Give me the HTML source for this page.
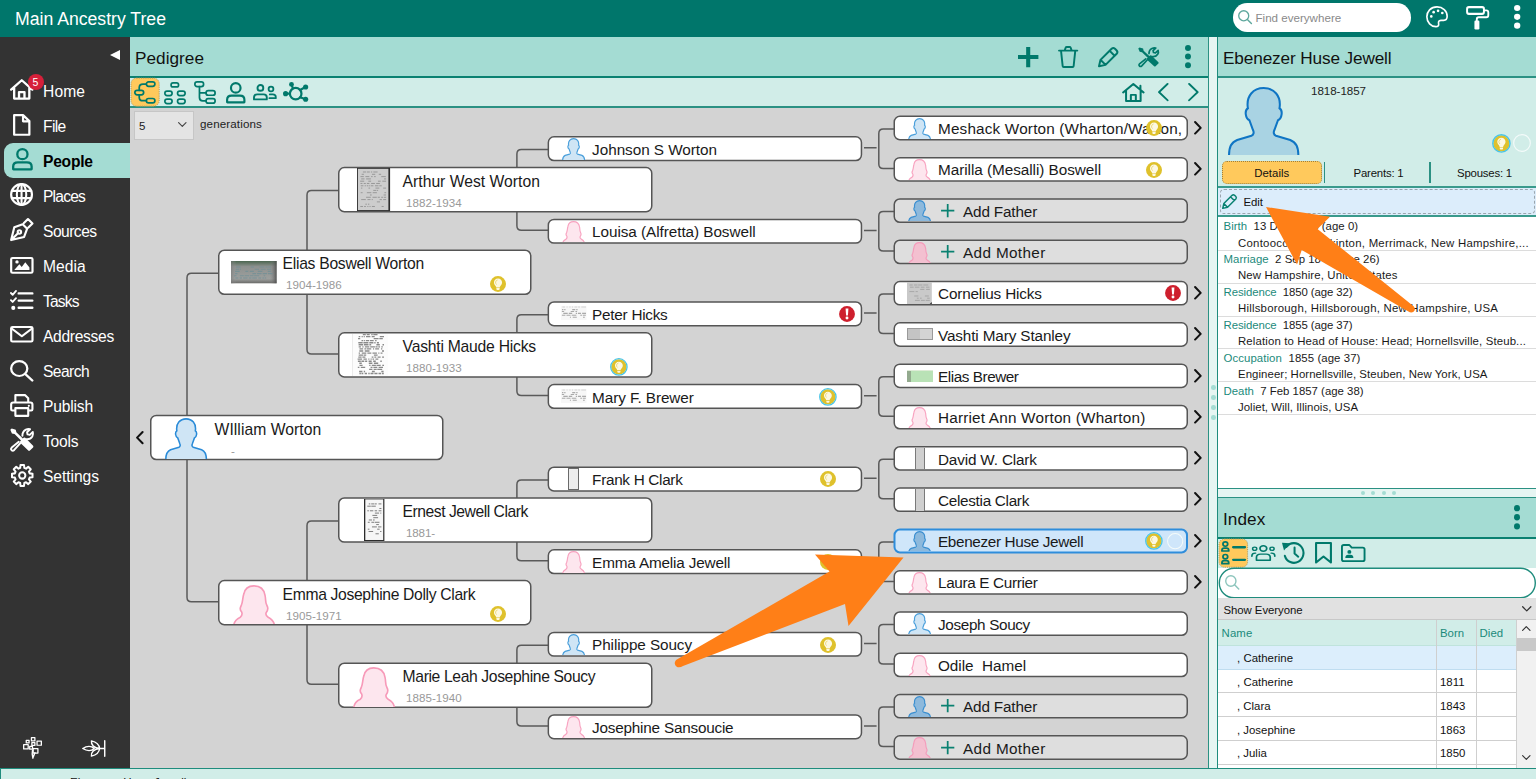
<!DOCTYPE html>
<html lang="en"><head><meta charset="utf-8"><title>Main Ancestry Tree</title>
<style>
*{box-sizing:border-box;margin:0;padding:0}
html,body{width:1536px;height:779px;overflow:hidden;background:#D3D3D3}
body{font-family:"Liberation Sans",sans-serif;color:#1a1a1a;position:relative}
.a{position:absolute}
.ic{position:absolute;overflow:visible}
.t{position:absolute;white-space:nowrap;line-height:1}
#top{left:0;top:0;width:1536px;height:37px;background:#00766B}
#side{left:0;top:37px;width:130px;height:732px;background:#333}
.nav{color:#fff;font-size:15.6px;left:43px}
.box{position:absolute;border-radius:5px;overflow:hidden}
.nm{font-size:15.3px;color:#1a1a1a}
.dt{font-size:11.6px;color:#999}
.ev{font-size:11.4px}
.ev b{font-weight:normal;color:#1B8A7B}
</style></head><body>

<div id="top" class="a"></div>
<div class="t" style="left:15px;top:11px;font-size:17.65px;color:#fff;letter-spacing:0.000px">Main Ancestry Tree</div>
<div class="a" style="left:1232.6px;top:3px;width:178.4px;height:28.5px;border-radius:14.25px;background:#fff"></div>
<svg class="ic" style="left:1237.80px;top:9.70px;width:14.20px;height:14.30px;color:#5FA89E;" viewBox="0.25 0.25 14.75 14.75" preserveAspectRatio="none"><circle fill="none" stroke="currentColor" stroke-width="1.4" stroke-linecap="round" stroke-linejoin="round" cx="6.2" cy="6.2" r="5.2"/><path fill="none" stroke="currentColor" stroke-width="1.5" stroke-linecap="round" stroke-linejoin="round" d="M10 10 L14.2 14.2"/></svg>
<div class="t" style="left:1255.5px;top:12px;font-size:11.6px;color:#8a8a8a;letter-spacing:-0.000px">Find everywhere</div>
<svg class="ic" style="left:1426.00px;top:5.70px;width:22.00px;height:21.70px;color:#fff;" viewBox="0.12 0.25 22.75 21.5" preserveAspectRatio="none"><path fill="none" stroke="currentColor" stroke-width="1.7" stroke-linecap="round" stroke-linejoin="round" d="M11.5 1.2 C5 1.2 1 5.6 1 11 C1 16.6 5.4 20.8 10.4 20.8 C12.6 20.8 13.4 19.6 13.2 18.2 C12.8 16.2 13 14.4 15.6 14.4 H18.4 C20.6 14.4 22 13 22 10.4 C22 5 17.4 1.2 11.5 1.2 Z"/><circle fill="currentColor" cx="5.6" cy="10.6" r="1.35"/><circle fill="currentColor" cx="8" cy="6.4" r="1.35"/><circle fill="currentColor" cx="12.6" cy="5" r="1.35"/><circle fill="currentColor" cx="17" cy="7.2" r="1.35"/></svg>
<svg class="ic" style="left:1465.70px;top:6.00px;width:23.30px;height:23.50px;color:#fff;" viewBox="0.5 0.5 23.5 23.0" preserveAspectRatio="none"><rect fill="none" stroke="currentColor" stroke-width="2" stroke-linecap="round" stroke-linejoin="round" x="1.6" y="1.6" width="17" height="6.6" rx="1.8"/><path fill="none" stroke="currentColor" stroke-width="1.9" stroke-linecap="round" stroke-linejoin="round" d="M18.6 4.8 H21 Q23 4.8 23 6.8 V9.6 Q23 11.6 21 11.6 H13.4 Q11.4 11.6 11.4 13.4 V15"/><rect fill="currentColor" x="9" y="14.6" width="5" height="8.8" rx="1.2"/></svg>
<svg class="ic" style="left:1513.80px;top:4.90px;width:6.40px;height:23.70px;color:#fff;" viewBox="0.88 0.5 6.25 24.0" preserveAspectRatio="none"><circle fill="currentColor" cx="4" cy="3.6" r="3.1"/><circle fill="currentColor" cx="4" cy="12.5" r="3.1"/><circle fill="currentColor" cx="4" cy="21.4" r="3.1"/></svg>
<div id="side" class="a"></div>
<div class="a" style="left:110px;top:49.5px;width:0;height:0;border-top:5.5px solid transparent;border-bottom:5.5px solid transparent;border-right:10.3px solid #fff"></div>
<div class="a" style="left:4px;top:143px;width:126px;height:35px;background:#A4DCD3;border-radius:9px 0 0 9px"></div>
<svg class="ic" style="left:9.50px;top:79.00px;width:23.50px;height:20.80px;color:#fff;" viewBox="0.38 0.75 23.25 21.0" preserveAspectRatio="none"><path fill="none" stroke="currentColor" stroke-width="2.3" stroke-linecap="round" stroke-linejoin="round" d="M1.5 11.5 L12 2 L22.5 11.5 M4.5 9.5 V20.5 H19.5 V9.5 M9.3 20.5 V14 H14.7 V20.5"/></svg>
<div class="t nav" style="top:84px;color:#fff;font-weight:normal;letter-spacing:0.123px">Home</div>
<svg class="ic" style="left:13.20px;top:113.90px;width:17.50px;height:21.90px;color:#fff;" viewBox="4.38 1.12 17.25 22.0" preserveAspectRatio="none"><path fill="none" stroke="currentColor" stroke-width="2.2" stroke-linecap="round" stroke-linejoin="round" d="M5.5 2.3 H14.5 L20.5 8.3 V22 H5.5 Z M14.3 2.5 V8.5 H20.3"/></svg>
<div class="t nav" style="top:119px;color:#fff;font-weight:normal;letter-spacing:-0.635px">File</div>
<svg class="ic" style="left:11.50px;top:148.00px;width:20.80px;height:22.50px;color:#00796B;" viewBox="2.12 0.88 20.75 22.88" preserveAspectRatio="none"><circle fill="none" stroke="currentColor" stroke-width="2.3" stroke-linecap="round" stroke-linejoin="round" cx="12.5" cy="7.2" r="5.1"/><path fill="none" stroke="currentColor" stroke-width="2.3" stroke-linecap="round" stroke-linejoin="round" d="M3.3 22.3 V19.8 Q3.3 15.4 8 15.4 H17 Q21.7 15.4 21.7 19.8 V22.3 Q21.7 22.6 21.4 22.6 H3.6 Q3.3 22.6 3.3 22.3 Z"/></svg>
<div class="t nav" style="top:154px;color:#000;font-weight:bold;letter-spacing:-0.240px">People</div>
<svg class="ic" style="left:10.40px;top:183.00px;width:23.10px;height:23.00px;color:#fff;" viewBox="0.75 0.75 23.5 23.5" preserveAspectRatio="none"><circle fill="none" stroke="currentColor" stroke-width="2.2" stroke-linecap="round" stroke-linejoin="round" cx="12.5" cy="12.5" r="10.6"/><ellipse fill="none" stroke="currentColor" stroke-width="2.1" stroke-linecap="round" stroke-linejoin="round" cx="12.5" cy="12.5" rx="4.8" ry="10.6"/><path fill="none" stroke="currentColor" stroke-width="2.1" stroke-linecap="round" stroke-linejoin="round" d="M2.6 8.8 H22.4 M2.6 16.2 H22.4 M12.5 2 V23"/></svg>
<div class="t nav" style="top:189px;color:#fff;font-weight:normal;letter-spacing:-0.802px">Places</div>
<svg class="ic" style="left:10.40px;top:217.80px;width:23.60px;height:23.20px;color:#fff;" viewBox="1.38 1.5 23.12 23.12" preserveAspectRatio="none"><path fill="none" stroke="currentColor" stroke-width="2.1" stroke-linecap="round" stroke-linejoin="round" d="M2.5 23.5 L5.6 10.8 L13.8 7.8 L18.2 12.2 L15.2 20.4 Z M2.8 23.2 L9.2 16.8 M15 6.6 L19 2.6 L23.4 7 L19.4 11"/><circle fill="none" stroke="currentColor" stroke-width="2" stroke-linecap="round" stroke-linejoin="round" cx="10.6" cy="15.4" r="1.7"/></svg>
<div class="t nav" style="top:224px;color:#fff;font-weight:normal;letter-spacing:-0.517px">Sources</div>
<svg class="ic" style="left:10.40px;top:256.50px;width:23.60px;height:16.90px;color:#fff;" viewBox="1.12 3.5 23.88 17.88" preserveAspectRatio="none"><rect fill="none" stroke="currentColor" stroke-width="2.2" stroke-linecap="round" stroke-linejoin="round" x="2.3" y="4.6" width="21.6" height="15.6" rx="1.4"/><path fill="currentColor" d="M5.4 17.3 L10.6 11.3 L13 14 L16.6 9 L20.8 14.6 V17.3 Z"/><circle fill="currentColor" cx="8.2" cy="8.7" r="1.7"/></svg>
<div class="t nav" style="top:259px;color:#fff;font-weight:normal;letter-spacing:0.043px">Media</div>
<svg class="ic" style="left:10.40px;top:290.00px;width:23.60px;height:20.00px;color:#fff;" viewBox="1.5 2.25 23.12 19.5" preserveAspectRatio="none"><path fill="none" stroke="currentColor" stroke-width="2.3" stroke-linecap="round" stroke-linejoin="round" d="M10 5.6 H23.4 M10 12.6 H23.4 M10 19.6 H23.4"/><path fill="none" stroke="currentColor" stroke-width="1.8" stroke-linecap="round" stroke-linejoin="round" d="M2.4 5.2 L4.1 6.9 L7.4 3.2 M2.4 12.2 L4.1 13.9 L7.4 10.2"/><circle fill="currentColor" cx="4.7" cy="19.7" r="2"/></svg>
<div class="t nav" style="top:294px;color:#fff;font-weight:normal;letter-spacing:-0.832px">Tasks</div>
<svg class="ic" style="left:10.40px;top:326.30px;width:23.60px;height:16.70px;color:#fff;" viewBox="1.12 3.25 23.88 18.12" preserveAspectRatio="none"><rect fill="none" stroke="currentColor" stroke-width="2.2" stroke-linecap="round" stroke-linejoin="round" x="2.3" y="4.4" width="21.6" height="15.8" rx="1.4"/><path fill="none" stroke="currentColor" stroke-width="2.2" stroke-linecap="round" stroke-linejoin="round" d="M2.8 6 L13.1 14.4 L23.4 6"/></svg>
<div class="t nav" style="top:329px;color:#fff;font-weight:normal;letter-spacing:-0.299px">Addresses</div>
<svg class="ic" style="left:10.40px;top:360.00px;width:23.60px;height:21.70px;color:#fff;" viewBox="1.5 1.0 22.75 22.88" preserveAspectRatio="none"><circle fill="none" stroke="currentColor" stroke-width="2.2" stroke-linecap="round" stroke-linejoin="round" cx="10.4" cy="10" r="7.8"/><path fill="none" stroke="currentColor" stroke-width="2.4" stroke-linecap="round" stroke-linejoin="round" d="M16.2 15.8 L23 22.6"/></svg>
<div class="t nav" style="top:364px;color:#fff;font-weight:normal;letter-spacing:-0.570px">Search</div>
<svg class="ic" style="left:10.40px;top:394.00px;width:23.60px;height:23.00px;color:#fff;" viewBox="1.25 1.25 23.5 22.5" preserveAspectRatio="none"><path fill="none" stroke="currentColor" stroke-width="2.1" stroke-linecap="round" stroke-linejoin="round" d="M6.6 9.4 V2.4 H16.4 L19.4 5.4 V9.4 M6.4 17.4 H3.6 Q2.4 17.4 2.4 16.2 V11.6 Q2.4 9.6 4.4 9.6 H21.6 Q23.6 9.6 23.6 11.6 V16.2 Q23.6 17.4 22.4 17.4 H19.6 M6.6 15 H19.4 V22.6 H6.6 Z"/><circle fill="currentColor" cx="20" cy="12.8" r="1.1"/></svg>
<div class="t nav" style="top:399px;color:#fff;font-weight:normal;letter-spacing:-0.165px">Publish</div>
<svg class="ic" style="left:10.20px;top:428.00px;width:24.10px;height:23.70px;color:#fff;" viewBox="0.5 0.75 23.88 23.75" preserveAspectRatio="none"><path fill="currentColor" d="M2.2 1.2 L0.8 2.6 L2.4 6.2 L5 6.8 L11.4 13.2 L10.6 14 Q10 14.8 10.6 15.6 L18.6 23.4 Q19.4 24 20.2 23.4 L23.4 20.2 Q24 19.4 23.4 18.6 L15.6 10.6 Q14.8 10 14 10.6 L13.2 11.4 L6.8 5 L6.2 2.4 Z"/><path fill="none" stroke="currentColor" stroke-width="1.9" stroke-linecap="round" stroke-linejoin="round" d="M9.2 14.6 L2.2 20.4 Q0.9 21.8 2.1 23 Q3.4 24.1 4.7 22.8 L10.8 16"/><path fill="none" stroke="currentColor" stroke-width="1.9" stroke-linecap="round" stroke-linejoin="round" d="M12.8 8.6 Q12.6 4.4 16.2 2.4 Q18.4 1.4 20.4 2 L17.4 5 L17.9 7.2 L20.1 7.7 L23.1 4.7 Q23.8 7 22.6 9.2 Q20.6 12.4 16.8 12"/></svg>
<div class="t nav" style="top:434px;color:#fff;font-weight:normal;letter-spacing:-0.221px">Tools</div>
<svg class="ic" style="left:11.00px;top:463.50px;width:22.50px;height:22.90px;color:#fff;" viewBox="0.62 0.62 23.75 23.75" preserveAspectRatio="none"><path fill="none" stroke="currentColor" stroke-width="2.1" stroke-linecap="round" stroke-linejoin="round" d="M10.34 4.69 L10.64 1.66 L14.36 1.66 L14.66 4.69 L16.49 5.45 L18.85 3.52 L21.48 6.15 L19.55 8.51 L20.31 10.34 L23.34 10.64 L23.34 14.36 L20.31 14.66 L19.55 16.49 L21.48 18.85 L18.85 21.48 L16.49 19.55 L14.66 20.31 L14.36 23.34 L10.64 23.34 L10.34 20.31 L8.51 19.55 L6.15 21.48 L3.52 18.85 L5.45 16.49 L4.69 14.66 L1.66 14.36 L1.66 10.64 L4.69 10.34 L5.45 8.51 L3.52 6.15 L6.15 3.52 L8.51 5.45 Z"/><circle fill="none" stroke="currentColor" stroke-width="2.1" stroke-linecap="round" stroke-linejoin="round" cx="12.5" cy="12.5" r="3.3"/></svg>
<div class="t nav" style="top:469px;color:#fff;font-weight:normal;letter-spacing:-0.045px">Settings</div>
<div class="a" style="left:28px;top:74px;width:16px;height:16px;border-radius:8px;background:#D6203A"></div>
<div class="t" style="left:32.5px;top:77px;font-size:10.5px;color:#fff">5</div>
<svg class="ic" style="left:22.50px;top:737.00px;width:19.00px;height:22.00px;color:#fff;" viewBox="0.38 0.38 17.62 21.38" preserveAspectRatio="none"><path fill="none" stroke="currentColor" stroke-width="1.3" stroke-linecap="round" stroke-linejoin="round" d="M9.6 21 Q8.4 17 9.2 13.4 M9.6 20.6 L11.4 15.6"/><rect fill="none" stroke="currentColor" stroke-width="1.2" stroke-linecap="round" stroke-linejoin="round" x="8.2" y="1" width="3.2" height="3.2"/><rect fill="none" stroke="currentColor" stroke-width="1.2" stroke-linecap="round" stroke-linejoin="round" x="3.4" y="3.6" width="2.6" height="2.6"/><rect fill="none" stroke="currentColor" stroke-width="1.2" stroke-linecap="round" stroke-linejoin="round" x="8.6" y="5.8" width="2.8" height="2.8"/><rect fill="none" stroke="currentColor" stroke-width="1.2" stroke-linecap="round" stroke-linejoin="round" x="13.4" y="4.4" width="4" height="4"/><rect fill="none" stroke="currentColor" stroke-width="1.2" stroke-linecap="round" stroke-linejoin="round" x="1" y="7.8" width="4.2" height="4.2"/><rect fill="none" stroke="currentColor" stroke-width="1.2" stroke-linecap="round" stroke-linejoin="round" x="6.6" y="9.6" width="2.6" height="2.6"/><rect fill="none" stroke="currentColor" stroke-width="1.2" stroke-linecap="round" stroke-linejoin="round" x="9.8" y="11.6" width="4.4" height="4.4"/></svg>
<svg class="ic" style="left:82.00px;top:739.50px;width:23.50px;height:17.00px;color:#fff;" viewBox="0.25 0.12 23.0 17.75" preserveAspectRatio="none"><path fill="none" stroke="currentColor" stroke-width="1.4" stroke-linecap="round" stroke-linejoin="round" d="M22.5 0.8 V17.2 M22.5 9 H17 M17.5 9 C17 4.5 14 2 9.5 1 C9 5 12 8.5 17.5 9 Z M17.5 9 C17 13.5 14 16 9.5 17 C9 13 12 9.5 17.5 9 Z M12.2 9 C9.5 6.2 5 6.2 1 9 C5 11.8 9.5 11.8 12.2 9 Z"/></svg>
<div class="a" style="left:130px;top:37px;width:1079px;height:39px;background:#A4DCD3"></div>
<div class="a" style="left:130px;top:76px;width:1079px;height:2px;background:#0A8171"></div>
<div class="t" style="left:135px;top:50px;font-size:17.2px;color:#111;letter-spacing:0.023px">Pedigree</div>
<svg class="ic" style="left:1017.80px;top:47.10px;width:20.40px;height:20.20px;color:#00796B;" viewBox="0.0 0.0 20.0 20.0" preserveAspectRatio="none"><path fill="currentColor" d="M8 0 H12 V8 H20 V12 H12 V20 H8 V12 H0 V8 H8 Z"/></svg>
<svg class="ic" style="left:1058.00px;top:46.00px;width:20.30px;height:22.00px;color:#00796B;" viewBox="0.0 0.25 20.0 21.75" preserveAspectRatio="none"><path fill="none" stroke="currentColor" stroke-width="1.9" stroke-linecap="round" stroke-linejoin="round" d="M1 4.8 H19 M3 5 L4.6 20.2 Q4.7 21 5.5 21 H14.5 Q15.3 21 15.4 20.2 L17 5 M6.6 4.6 L7.6 1.8 Q7.8 1.2 8.6 1.2 H11.4 Q12.2 1.2 12.4 1.8 L13.4 4.6"/></svg>
<svg class="ic" style="left:1098.00px;top:47.00px;width:20.40px;height:20.30px;color:#00796B;" viewBox="0.25 0.25 19.38 19.5" preserveAspectRatio="none"><path fill="none" stroke="currentColor" stroke-width="1.9" stroke-linecap="round" stroke-linejoin="round" d="M1.2 18.8 L2.6 12.6 L13.2 2 Q14.8 0.6 16.4 2 L18 3.6 Q19.4 5.2 18 6.8 L7.4 17.4 Z M2.8 12.8 L7.2 17.2 M11.4 4 L16 8.6"/></svg>
<svg class="ic" style="left:1137.50px;top:47.00px;width:21.30px;height:20.30px;color:#00796B;" viewBox="0.5 0.75 23.88 23.75" preserveAspectRatio="none"><path fill="currentColor" d="M2.2 1.2 L0.8 2.6 L2.4 6.2 L5 6.8 L11.4 13.2 L10.6 14 Q10 14.8 10.6 15.6 L18.6 23.4 Q19.4 24 20.2 23.4 L23.4 20.2 Q24 19.4 23.4 18.6 L15.6 10.6 Q14.8 10 14 10.6 L13.2 11.4 L6.8 5 L6.2 2.4 Z"/><path fill="none" stroke="currentColor" stroke-width="1.9" stroke-linecap="round" stroke-linejoin="round" d="M9.2 14.6 L2.2 20.4 Q0.9 21.8 2.1 23 Q3.4 24.1 4.7 22.8 L10.8 16"/><path fill="none" stroke="currentColor" stroke-width="1.9" stroke-linecap="round" stroke-linejoin="round" d="M12.8 8.6 Q12.6 4.4 16.2 2.4 Q18.4 1.4 20.4 2 L17.4 5 L17.9 7.2 L20.1 7.7 L23.1 4.7 Q23.8 7 22.6 9.2 Q20.6 12.4 16.8 12"/></svg>
<svg class="ic" style="left:1185.00px;top:45.40px;width:6.00px;height:23.20px;color:#00796B;" viewBox="0.88 0.5 6.25 24.0" preserveAspectRatio="none"><circle fill="currentColor" cx="4" cy="3.6" r="3.1"/><circle fill="currentColor" cx="4" cy="12.5" r="3.1"/><circle fill="currentColor" cx="4" cy="21.4" r="3.1"/></svg>
<div class="a" style="left:130px;top:78px;width:1079px;height:28px;background:#D1EDE8"></div>
<div class="a" style="left:130px;top:106px;width:1079px;height:1.5px;background:#2B9183"></div>
<svg class="a" style="left:128px;top:76px;width:34px;height:33px" viewBox="128 76 34 33"><rect x="131" y="78.1" width="28.2" height="28.1" rx="5.6" fill="#FFC95C" stroke="#A8935F" stroke-width="0.9" stroke-dasharray="1.1 1.1"/></svg>
<svg class="ic" style="left:134.00px;top:81.00px;width:21.75px;height:22.75px;color:#00796B;" viewBox="0.0 0.0 21.75 22.75" preserveAspectRatio="none"><rect fill="none" stroke="currentColor" stroke-width="1.7" stroke-linecap="round" stroke-linejoin="round" x="12.35" y="0.85" width="8.55" height="4.5" rx="2.25"/><rect fill="none" stroke="currentColor" stroke-width="1.7" stroke-linecap="round" stroke-linejoin="round" x="0.85" y="9.3" width="8.8" height="4.5" rx="2.25"/><rect fill="none" stroke="currentColor" stroke-width="1.7" stroke-linecap="round" stroke-linejoin="round" x="12.35" y="17.5" width="8.55" height="4.4" rx="2.2"/><path fill="none" stroke="currentColor" stroke-width="1.75" stroke-linecap="round" stroke-linejoin="round" d="M12.35 3.1 H9 Q5.25 3.1 5.25 6.5 V9.3 M5.25 13.8 V16.4 Q5.25 19.7 9 19.7 H12.35"/></svg>
<svg class="ic" style="left:164.00px;top:81.50px;width:22.00px;height:22.50px;color:#00796B;" viewBox="0.0 0.0 22.12 21.88" preserveAspectRatio="none"><rect fill="none" stroke="currentColor" stroke-width="1.7" stroke-linecap="round" stroke-linejoin="round" x="7.1" y="0.85" width="7.55" height="4.0" rx="2.0"/><rect fill="none" stroke="currentColor" stroke-width="1.7" stroke-linecap="round" stroke-linejoin="round" x="0.85" y="8.85" width="7.3" height="4.4" rx="2.2"/><rect fill="none" stroke="currentColor" stroke-width="1.7" stroke-linecap="round" stroke-linejoin="round" x="13.6" y="8.85" width="7.65" height="4.4" rx="2.2"/><rect fill="none" stroke="currentColor" stroke-width="1.7" stroke-linecap="round" stroke-linejoin="round" x="0.85" y="16.6" width="7.3" height="4.4" rx="2.2"/><rect fill="none" stroke="currentColor" stroke-width="1.7" stroke-linecap="round" stroke-linejoin="round" x="13.6" y="16.6" width="7.65" height="4.4" rx="2.2"/></svg>
<svg class="ic" style="left:194.00px;top:81.00px;width:22.00px;height:23.00px;color:#00796B;" viewBox="0.0 -0.12 22.12 22.62" preserveAspectRatio="none"><rect fill="none" stroke="currentColor" stroke-width="1.7" stroke-linecap="round" stroke-linejoin="round" x="0.85" y="0.85" width="8.8" height="4.6" rx="2.3"/><rect fill="none" stroke="currentColor" stroke-width="1.7" stroke-linecap="round" stroke-linejoin="round" x="12.1" y="9.3" width="9.15" height="4.6" rx="2.3"/><rect fill="none" stroke="currentColor" stroke-width="1.7" stroke-linecap="round" stroke-linejoin="round" x="12.1" y="17.3" width="9.15" height="4.4" rx="2.2"/><path fill="none" stroke="currentColor" stroke-width="1.75" stroke-linecap="round" stroke-linejoin="round" d="M5.5 5.5 V16.2 Q5.5 19.5 8.8 19.5 H12.1 M5.5 11.6 H12.1"/></svg>
<svg class="ic" style="left:225.50px;top:81.60px;width:19.50px;height:21.40px;color:#00796B;" viewBox="2.12 0.88 20.75 22.88" preserveAspectRatio="none"><circle fill="none" stroke="currentColor" stroke-width="2.3" stroke-linecap="round" stroke-linejoin="round" cx="12.5" cy="7.2" r="5.1"/><path fill="none" stroke="currentColor" stroke-width="2.3" stroke-linecap="round" stroke-linejoin="round" d="M3.3 22.3 V19.8 Q3.3 15.4 8 15.4 H17 Q21.7 15.4 21.7 19.8 V22.3 Q21.7 22.6 21.4 22.6 H3.6 Q3.3 22.6 3.3 22.3 Z"/></svg>
<svg class="ic" style="left:253.00px;top:84.00px;width:23.75px;height:16.40px;color:#00796B;" viewBox="0.0 0.0 23.75 16.38" preserveAspectRatio="none"><circle fill="none" stroke="currentColor" stroke-width="1.9" stroke-linecap="round" stroke-linejoin="round" cx="7.4" cy="3.9" r="2.9"/><path fill="none" stroke="currentColor" stroke-width="1.9" stroke-linecap="round" stroke-linejoin="round" d="M1 15.4 V13.6 Q1 10.4 4.2 10.4 H10.6 Q13.8 10.4 13.8 13.6 V15.4 Z"/><circle fill="none" stroke="currentColor" stroke-width="1.8" stroke-linecap="round" stroke-linejoin="round" cx="18" cy="5" r="2.4"/><path fill="none" stroke="currentColor" stroke-width="1.8" stroke-linecap="round" stroke-linejoin="round" d="M16.8 10.4 H19.8 Q22.8 10.4 22.8 13 V14.2 H16.4"/></svg>
<svg class="ic" style="left:282.75px;top:82.25px;width:25.25px;height:19.75px;color:#00796B;" viewBox="0.0 0.0 24.88 19.75" preserveAspectRatio="none"><circle fill="none" stroke="currentColor" stroke-width="2.2" stroke-linecap="round" stroke-linejoin="round" cx="12.5" cy="11.65" r="5.7"/><path fill="none" stroke="currentColor" stroke-width="2.1" stroke-linecap="round" stroke-linejoin="round" d="M6.8 11.65 H2.2 M9.8 6.6 L8.4 2.4 M17 8 L22 5 M17 15.2 L22 17.2"/><circle fill="currentColor" cx="2.55" cy="11.65" r="2.55"/><circle fill="currentColor" cx="8.35" cy="2.4" r="2.4"/><circle fill="currentColor" cx="22.3" cy="5" r="2.55"/><circle fill="currentColor" cx="22.3" cy="17.2" r="2.55"/></svg>
<svg class="ic" style="left:1122.00px;top:83.00px;width:22.70px;height:19.00px;color:#00796B;" viewBox="0.12 0.38 22.75 20.5" preserveAspectRatio="none"><path fill="none" stroke="currentColor" stroke-width="2" stroke-linecap="round" stroke-linejoin="round" d="M1.2 10.6 L11.5 1.4 L21.8 10.6 M4.2 8.6 V19.8 H18.8 V8.6 M9 19.8 V13.2 H14 V19.8 M18.6 7.4 V3.4"/></svg>
<svg class="ic" style="left:1157.70px;top:83.30px;width:10.70px;height:18.20px;color:#00796B;" viewBox="0.38 0.12 10.5 20.75" preserveAspectRatio="none"><path fill="none" stroke="currentColor" stroke-width="2" stroke-linecap="round" stroke-linejoin="round" d="M9.8 1.2 L1.4 10.5 L9.8 19.8"/></svg>
<svg class="ic" style="left:1187.70px;top:83.30px;width:10.70px;height:18.20px;color:#00796B;" viewBox="0.12 0.12 10.5 20.75" preserveAspectRatio="none"><path fill="none" stroke="currentColor" stroke-width="2" stroke-linecap="round" stroke-linejoin="round" d="M1.2 1.2 L9.6 10.5 L1.2 19.8"/></svg>
<div class="a" style="left:1207.8px;top:37px;width:1.4px;height:732px;background:#2B9183"></div>
<div class="a" style="left:1209.2px;top:37px;width:8.2px;height:732px;background:#E6F5F2"></div>
<div class="a" style="left:1211px;top:385.4px;width:4.6px;height:4.6px;border-radius:2.3px;background:#A4DCD3"></div>
<div class="a" style="left:1211px;top:395.4px;width:4.6px;height:4.6px;border-radius:2.3px;background:#A4DCD3"></div>
<div class="a" style="left:1211px;top:405.4px;width:4.6px;height:4.6px;border-radius:2.3px;background:#A4DCD3"></div>
<div class="a" style="left:1211px;top:415.4px;width:4.6px;height:4.6px;border-radius:2.3px;background:#A4DCD3"></div>
<div class="a" style="left:134px;top:111px;width:60px;height:29px;background:#E4E4E4;border:1px solid #C6C6C6"></div>
<div class="t" style="left:139px;top:121px;font-size:11.5px">5</div>
<svg class="ic" style="left:177.50px;top:122.30px;width:8.60px;height:5.00px;color:#444;" viewBox="0.12 0.12 9.75 5.62" preserveAspectRatio="none"><path fill="none" stroke="currentColor" stroke-width="1.3" stroke-linecap="round" stroke-linejoin="round" d="M0.8 0.8 L5 5 L9.2 0.8"/></svg>
<div class="t" style="left:200px;top:118px;font-size:11.6px;color:#222;letter-spacing:0.128px">generations</div>
<svg class="a" style="left:0;top:0;width:1536px;height:779px" viewBox="0 0 1536 779"><path d="M219 273.15 H191.5 Q187 273.15 187 277.65 V597.25 Q187 601.75 191.5 601.75 H219 M339 190.55 H311.5 Q307 190.55 307 195.05 V349.45 Q307 353.95 311.5 353.95 H339 M339 520.95 H311.5 Q307 520.95 307 525.45 V679.85 Q307 684.35 311.5 684.35 H339 M549 149.55 H521.4 Q516.9 149.55 516.9 154.05 V225.85 Q516.9 230.35 521.4 230.35 H549 M549 314.75 H521.4 Q516.9 314.75 516.9 319.25 V391.05 Q516.9 395.55 521.4 395.55 H549 M549 479.95 H521.4 Q516.9 479.95 516.9 484.45 V556.25 Q516.9 560.75 521.4 560.75 H549 M549 645.15 H521.4 Q516.9 645.15 516.9 649.65 V721.45 Q516.9 725.95 521.4 725.95 H549 M895 128.90 H883.3 Q878.8 128.90 878.8 133.40 V163.90 Q878.8 168.40 883.3 168.40 H895 M864 147.85 H876.6 M895 211.50 H883.3 Q878.8 211.50 878.8 216.00 V246.50 Q878.8 251.00 883.3 251.00 H895 M864 230.45 H876.6 M895 294.10 H883.3 Q878.8 294.10 878.8 298.60 V329.10 Q878.8 333.60 883.3 333.60 H895 M864 313.05 H876.6 M895 376.70 H883.3 Q878.8 376.70 878.8 381.20 V411.70 Q878.8 416.20 883.3 416.20 H895 M864 395.65 H876.6 M895 459.30 H883.3 Q878.8 459.30 878.8 463.80 V494.30 Q878.8 498.80 883.3 498.80 H895 M864 478.25 H876.6 M895 541.90 H883.3 Q878.8 541.90 878.8 546.40 V576.90 Q878.8 581.40 883.3 581.40 H895 M864 560.85 H876.6 M895 624.50 H883.3 Q878.8 624.50 878.8 629.00 V659.50 Q878.8 664.00 883.3 664.00 H895 M864 643.45 H876.6 M895 707.10 H883.3 Q878.8 707.10 878.8 711.60 V742.10 Q878.8 746.60 883.3 746.60 H895 M864 726.05 H876.6" fill="none" stroke="#5A5A5A" stroke-width="1.5"/><rect x="150.75" y="415.40" width="292.00" height="44.10" rx="5.65" fill="#fff" stroke="#555" stroke-width="1.5"/><rect x="218.75" y="250.20" width="312.00" height="44.10" rx="5.65" fill="#fff" stroke="#555" stroke-width="1.5"/><rect x="218.75" y="580.60" width="312.00" height="44.10" rx="5.65" fill="#fff" stroke="#555" stroke-width="1.5"/><rect x="338.75" y="167.60" width="313.00" height="44.10" rx="5.65" fill="#fff" stroke="#555" stroke-width="1.5"/><rect x="338.75" y="332.80" width="313.00" height="44.10" rx="5.65" fill="#fff" stroke="#555" stroke-width="1.5"/><rect x="338.75" y="498.00" width="313.00" height="44.10" rx="5.65" fill="#fff" stroke="#555" stroke-width="1.5"/><rect x="338.75" y="663.20" width="313.00" height="44.10" rx="5.65" fill="#fff" stroke="#555" stroke-width="1.5"/><rect x="548.35" y="136.80" width="313.10" height="23.70" rx="5.65" fill="#fff" stroke="#555" stroke-width="1.5"/><rect x="548.35" y="219.40" width="313.10" height="23.70" rx="5.65" fill="#fff" stroke="#555" stroke-width="1.5"/><rect x="548.35" y="302.00" width="313.10" height="23.70" rx="5.65" fill="#fff" stroke="#555" stroke-width="1.5"/><rect x="548.35" y="384.60" width="313.10" height="23.70" rx="5.65" fill="#fff" stroke="#555" stroke-width="1.5"/><rect x="548.35" y="467.20" width="313.10" height="23.70" rx="5.65" fill="#fff" stroke="#555" stroke-width="1.5"/><rect x="548.35" y="549.80" width="313.10" height="23.70" rx="5.65" fill="#fff" stroke="#555" stroke-width="1.5"/><rect x="548.35" y="632.40" width="313.10" height="23.70" rx="5.65" fill="#fff" stroke="#555" stroke-width="1.5"/><rect x="548.35" y="715.00" width="313.10" height="23.70" rx="5.65" fill="#fff" stroke="#555" stroke-width="1.5"/><rect x="894.25" y="116.35" width="293.00" height="23.30" rx="5.65" fill="#fff" stroke="#555" stroke-width="1.5"/><rect x="894.25" y="157.65" width="293.00" height="23.30" rx="5.65" fill="#fff" stroke="#555" stroke-width="1.5"/><rect x="894.25" y="198.95" width="293.00" height="23.30" rx="5.65" fill="#DEDEDE" stroke="#555" stroke-width="1.5"/><rect x="894.25" y="240.25" width="293.00" height="23.30" rx="5.65" fill="#DEDEDE" stroke="#555" stroke-width="1.5"/><rect x="894.25" y="281.55" width="293.00" height="23.30" rx="5.65" fill="#fff" stroke="#555" stroke-width="1.5"/><rect x="894.25" y="322.85" width="293.00" height="23.30" rx="5.65" fill="#fff" stroke="#555" stroke-width="1.5"/><rect x="894.25" y="364.15" width="293.00" height="23.30" rx="5.65" fill="#fff" stroke="#555" stroke-width="1.5"/><rect x="894.25" y="405.45" width="293.00" height="23.30" rx="5.65" fill="#fff" stroke="#555" stroke-width="1.5"/><rect x="894.25" y="446.75" width="293.00" height="23.30" rx="5.65" fill="#fff" stroke="#555" stroke-width="1.5"/><rect x="894.25" y="488.05" width="293.00" height="23.30" rx="5.65" fill="#fff" stroke="#555" stroke-width="1.5"/><rect x="894.50" y="529.60" width="292.50" height="22.80" rx="5.4" fill="#CFE6FA" stroke="#2F8DDB" stroke-width="2"/><rect x="894.25" y="570.65" width="293.00" height="23.30" rx="5.65" fill="#fff" stroke="#555" stroke-width="1.5"/><rect x="894.25" y="611.95" width="293.00" height="23.30" rx="5.65" fill="#fff" stroke="#555" stroke-width="1.5"/><rect x="894.25" y="653.25" width="293.00" height="23.30" rx="5.65" fill="#fff" stroke="#555" stroke-width="1.5"/><rect x="894.25" y="694.55" width="293.00" height="23.30" rx="5.65" fill="#DEDEDE" stroke="#555" stroke-width="1.5"/><rect x="894.25" y="735.85" width="293.00" height="23.30" rx="5.65" fill="#DEDEDE" stroke="#555" stroke-width="1.5"/></svg>
<div class="box" style="left:151.50px;top:416.15px;width:290.50px;height:42.60px"><svg class="ic" style="left:13.30px;top:2.20px;width:42.20px;height:41.20px;color:#000;" viewBox="7.62 6.12 70.75 66.88" preserveAspectRatio="none"><path d="M9 73 C9 64 11 60 17 57.5 L31 53.5 C33.5 52.5 33.5 50 32.5 48 L29 38.5 C25 37 24 29 27.5 27 C25.5 15 33 7.5 43 7.5 C53 7.5 60.5 15 58.5 27 C62 29 61 37 57 38.5 L53.5 48 C52.5 50 52.5 52.5 55 53.5 L69 57.5 C75 60 77 64 77 73" fill="#CFE5F5" stroke="#2A8BD8" stroke-width="2.6"/></svg><div class="t nm" style="left:63.099999999999994px;top:5.50px;font-size:15.7px;letter-spacing:0.038px">WIlliam Worton</div><div class="t dt" style="left:79.5px;top:28.50px">-</div></div>
<svg class="ic" style="left:135.80px;top:430.85px;width:7.60px;height:13.20px;color:#111;" viewBox="0.0 0.0 7.12 13.12" preserveAspectRatio="none"><path fill="none" stroke="currentColor" stroke-width="1.9" stroke-linecap="round" stroke-linejoin="round" d="M6.2 1 L1 6.6 L6.2 12.2"/></svg>
<div class="box" style="left:219.50px;top:250.95px;width:310.50px;height:42.60px"><svg class="ic" style="left:11.40px;top:10.25px;width:45.6px;height:22.3px" viewBox="0 0 45.6 22.3" preserveAspectRatio="none"><defs><linearGradient id="gst" x1="0" y1="0" x2="0" y2="1"><stop offset="0" stop-color="#4B6650"/><stop offset="0.25" stop-color="#8E918F"/><stop offset="0.8" stop-color="#9C9F9D"/><stop offset="1" stop-color="#6A6A68"/></linearGradient><linearGradient id="gst2" x1="0" y1="0" x2="1" y2="0"><stop offset="0" stop-color="#777" stop-opacity="0.6"/><stop offset="0.12" stop-color="#999" stop-opacity="0"/><stop offset="0.85" stop-color="#888" stop-opacity="0"/><stop offset="1" stop-color="#444" stop-opacity="0.8"/></linearGradient></defs><rect width="45.6" height="22.3" fill="url(#gst)"/><rect width="45.6" height="22.3" fill="url(#gst2)"/><path d="M4.9 6.0h4.8M19.7 6.0h3.3M28.5 6.0h4.8M34.5 6.0h2.1M37.2 6.0h2.9M4.8 8.2h3.1M8.8 8.2h1.1M23.8 8.2h4.2M29.8 8.2h4.8M36.1 8.2h3.9M4.0 10.4h4.7M14.4 10.4h2.8M18.9 10.4h3.9M26.8 10.4h4.6M36.8 10.4h3.0M4.2 12.6h2.2M21.5 12.6h3.6M26.0 12.6h4.5M31.7 12.6h4.4M37.0 12.6h4.5M3.1 14.8h2.4M8.9 14.8h3.9M13.7 14.8h4.3M18.8 14.8h3.8M23.2 14.8h5.0M32.7 14.8h1.5M4.4 17.0h2.9M8.7 17.0h2.3M12.1 17.0h4.5M17.9 17.0h2.6M21.2 17.0h4.8M27.4 17.0h2.7M31.4 17.0h1.6M33.6 17.0h1.6" stroke="#6F8F96" stroke-width="1.1" opacity="0.75" fill="none"/></svg><div class="t nm" style="left:63.10000000000002px;top:5.50px;font-size:15.7px;letter-spacing:-0.288px">Elias Boswell Worton</div><div class="t dt" style="left:66.5px;top:28.50px;letter-spacing:0.027px">1904-1986</div><svg class="ic" style="left:270.30px;top:25.10px;width:16.00px;height:16.00px;color:#000;" viewBox="1.12 1.0 15.75 16.0" preserveAspectRatio="none"><circle cx="9" cy="9" r="7.9" fill="#DFC12C"/><path fill="#FCF8E3" d="M9 3.6 C6.6 3.6 5 5.4 5 7.5 C5 9.1 5.9 10 6.6 10.9 C7 11.4 7.2 11.9 7.3 12.5 H10.7 C10.8 11.9 11 11.4 11.4 10.9 C12.1 10 13 9.1 13 7.5 C13 5.4 11.4 3.6 9 3.6 Z M7.4 13.1 H10.6 V14 Q10.6 14.9 9.7 14.9 H8.3 Q7.4 14.9 7.4 14 Z"/><path fill="none" stroke="#E6CF58" stroke-width="0.7" d="M7.6 9.6 Q6.4 8.4 6.6 7 Q7 5.4 8.6 5"/></svg></div>
<div class="box" style="left:219.50px;top:581.35px;width:310.50px;height:42.60px"><svg class="ic" style="left:13.30px;top:3.30px;width:42.20px;height:40.20px;color:#000;" viewBox="15.75 9.62 67.5 63.5" preserveAspectRatio="none"><path d="M17 73 C18 66 22 63 27.5 60.5 C30 58 31 55 29.5 52 C26.5 49 26.5 46 29 42 C31.5 36 31 30 33 24 C35 14 41 11 49 11 C57 11 65 14 67 26 C68.5 32 67 37 70 42 C72.5 46 72 49 69 53 C67.5 56 69 58.5 72 60.5 C77 63 81 66 82 73" fill="#FDE6EE" stroke="#F79AB9" stroke-width="2.6"/></svg><div class="t nm" style="left:63.10000000000002px;top:5.50px;font-size:15.7px;letter-spacing:-0.339px">Emma Josephine Dolly Clark</div><div class="t dt" style="left:66.5px;top:28.50px;letter-spacing:0.027px">1905-1971</div><svg class="ic" style="left:270.30px;top:25.10px;width:16.00px;height:16.00px;color:#000;" viewBox="1.12 1.0 15.75 16.0" preserveAspectRatio="none"><circle cx="9" cy="9" r="7.9" fill="#DFC12C"/><path fill="#FCF8E3" d="M9 3.6 C6.6 3.6 5 5.4 5 7.5 C5 9.1 5.9 10 6.6 10.9 C7 11.4 7.2 11.9 7.3 12.5 H10.7 C10.8 11.9 11 11.4 11.4 10.9 C12.1 10 13 9.1 13 7.5 C13 5.4 11.4 3.6 9 3.6 Z M7.4 13.1 H10.6 V14 Q10.6 14.9 9.7 14.9 H8.3 Q7.4 14.9 7.4 14 Z"/><path fill="none" stroke="#E6CF58" stroke-width="0.7" d="M7.6 9.6 Q6.4 8.4 6.6 7 Q7 5.4 8.6 5"/></svg></div>
<div class="box" style="left:339.50px;top:168.35px;width:311.50px;height:42.60px"><svg class="ic" style="left:17.80px;top:-0.30px;width:33.1px;height:43.2px" viewBox="0 0 33.1 43.2" preserveAspectRatio="none"><rect width="33.1" height="43.2" fill="#2E2E2E"/><rect x="0.9" y="0.8" width="30.5" height="41.300000000000004" fill="#CDCDCD"/><path d="M5.9 4.0h3.1M9.8 4.0h3.0M13.9 4.0h1.3M16.3 4.0h4.3M4.7 6.3h2.2M15.0 6.3h3.2M21.8 6.3h2.3M3.5 8.6h3.3M8.4 8.6h3.9M14.1 8.6h1.5M17.1 8.6h1.6M24.3 8.6h4.5M4.2 10.9h3.3M9.1 10.9h4.8M27.0 10.9h2.1M3.1 13.2h4.1M11.3 13.2h2.8M21.0 13.2h2.7M25.3 13.2h3.8M3.5 15.5h1.9M6.7 15.5h2.1M9.9 15.5h2.5M14.1 15.5h3.8M19.2 15.5h3.7M3.8 17.8h2.6M7.7 17.8h1.2M9.8 17.8h1.6M12.2 17.8h1.0M13.9 17.8h2.5M18.0 17.8h3.5M22.3 17.8h2.4M4.0 20.1h1.3M11.5 20.1h1.6M18.5 20.1h3.8M26.2 20.1h2.9M16.3 22.4h3.1M20.0 22.4h1.1M3.7 24.7h1.9M9.9 24.7h4.4M15.7 24.7h4.2M27.4 24.7h1.7M13.0 27.0h1.7M26.6 27.0h2.4M9.1 29.3h4.7M15.5 29.3h4.3M20.7 29.3h2.2M24.2 29.3h2.0M27.0 29.3h2.1M4.2 31.6h4.6M10.5 31.6h3.0M14.7 31.6h1.1M22.6 31.6h2.3M26.2 31.6h2.9M19.9 33.9h3.1M8.4 36.2h1.5M11.0 36.2h1.3M3.3 38.5h2.7M7.1 38.5h1.8M10.3 38.5h1.1M12.5 38.5h1.1M14.9 38.5h3.0M24.6 38.5h2.1" stroke="#8C8C8C" stroke-width="0.8" opacity="1" fill="none"/></svg><div class="t nm" style="left:63.10000000000002px;top:5.50px;font-size:15.7px;letter-spacing:0.007px">Arthur West Worton</div><div class="t dt" style="left:66.5px;top:28.50px;letter-spacing:0.027px">1882-1934</div></div>
<div class="box" style="left:339.50px;top:333.55px;width:311.50px;height:42.60px"><svg class="ic" style="left:12.00px;top:-0.30px;width:36px;height:43.2px" viewBox="0 0 36 43.2" preserveAspectRatio="none"><rect width="36" height="43.2" fill="#FCFCFC"/><rect x="0" y="0" width="0.7" height="43.2" fill="#E4E4E4"/><path d="M10.8 1.6h3.0M14.7 1.6h3.0M19.3 1.6h1.4M21.3 1.6h4.2M6.7 3.6h1.6M9.6 3.6h1.2M11.7 3.6h1.1M14.0 3.6h4.4M19.7 3.6h3.0M27.8 3.6h4.2M6.0 5.7h2.2M21.7 5.7h4.9M27.3 5.7h3.5M9.5 7.7h1.5M11.7 7.7h1.2M13.8 7.7h3.2M17.8 7.7h3.9M23.1 7.7h1.5M6.3 9.8h4.4M11.4 9.8h5.0M17.3 9.8h4.1M22.3 9.8h1.3M24.9 9.8h2.0M6.6 11.8h4.5M11.9 11.8h4.6M17.4 11.8h1.8M24.4 11.8h3.4M30.5 11.8h1.5M6.7 13.9h2.2M10.3 13.9h1.3M12.9 13.9h4.4M18.2 13.9h4.7M23.5 13.9h2.1M26.3 13.9h1.7M29.3 13.9h1.5M7.5 15.9h3.6M12.4 15.9h1.6M14.6 15.9h4.6M21.0 15.9h1.1M23.2 15.9h3.9M29.0 15.9h1.3M7.3 18.0h3.9M12.8 18.0h4.7M30.0 18.0h2.0M6.7 20.1h1.3M9.8 20.1h4.5M15.4 20.1h3.9M20.5 20.1h4.4M26.3 20.1h1.1M28.6 20.1h1.9M6.7 22.1h4.7M12.0 22.1h2.2M21.9 22.1h3.7M6.3 24.2h3.3M10.4 24.2h3.0M19.7 24.2h1.7M22.4 24.2h1.9M25.6 24.2h3.0M30.1 24.2h1.9M5.6 26.2h4.5M11.5 26.2h3.3M16.3 26.2h1.1M18.6 26.2h1.1M20.5 26.2h1.6M23.5 26.2h2.8M5.9 28.3h2.9M9.4 28.3h2.9M13.1 28.3h2.1M16.6 28.3h3.1M21.2 28.3h2.6M28.3 28.3h1.5M7.3 30.3h2.5M16.8 30.3h3.6M21.9 30.3h4.3M7.5 32.4h3.1M17.2 32.4h1.3M19.8 32.4h4.1M24.5 32.4h4.2M30.3 32.4h1.7M5.8 34.4h1.6M8.8 34.4h4.4M18.6 34.4h1.9M21.4 34.4h3.9M26.6 34.4h4.4M17.1 36.4h3.3M21.7 36.4h3.0M25.3 36.4h4.9M7.1 38.5h3.3M11.8 38.5h1.3M19.9 38.5h2.9M29.3 38.5h2.3M7.4 40.5h1.5M9.5 40.5h1.8M12.7 40.5h2.3M16.3 40.5h1.4M18.5 40.5h3.0M22.4 40.5h3.1M26.5 40.5h2.7M30.0 40.5h1.8" stroke="#5E5E5E" stroke-width="1.35" opacity="0.72" fill="none"/></svg><div class="t nm" style="left:63.10000000000002px;top:5.50px;font-size:15.7px;letter-spacing:-0.232px">Vashti Maude Hicks</div><div class="t dt" style="left:66.5px;top:28.50px;letter-spacing:0.027px">1880-1933</div><svg class="ic" style="left:270.40px;top:24.20px;width:17.80px;height:17.80px;color:#000;" viewBox="-0.12 -0.12 18.25 18.25" preserveAspectRatio="none"><circle cx="9" cy="9" r="7.9" fill="#DFC12C"/><circle cx="9" cy="9" r="8.4" fill="none" stroke="#48C4E8" stroke-width="1.3"/><path fill="#FCF8E3" d="M9 3.6 C6.6 3.6 5 5.4 5 7.5 C5 9.1 5.9 10 6.6 10.9 C7 11.4 7.2 11.9 7.3 12.5 H10.7 C10.8 11.9 11 11.4 11.4 10.9 C12.1 10 13 9.1 13 7.5 C13 5.4 11.4 3.6 9 3.6 Z M7.4 13.1 H10.6 V14 Q10.6 14.9 9.7 14.9 H8.3 Q7.4 14.9 7.4 14 Z"/><path fill="none" stroke="#E6CF58" stroke-width="0.7" d="M7.6 9.6 Q6.4 8.4 6.6 7 Q7 5.4 8.6 5"/></svg></div>
<div class="box" style="left:339.50px;top:498.75px;width:311.50px;height:42.60px"><svg class="ic" style="left:24.40px;top:-0.30px;width:20.4px;height:43.2px" viewBox="0 0 20.4 43.2" preserveAspectRatio="none"><rect width="20.4" height="43.2" fill="#2B2B2B"/><rect x="1.3" y="1.4" width="17.9" height="40.6" fill="#F6F6F6"/><path d="M4.8 5.9h1.5M7.2 5.9h3.2M10.9 5.9h1.9M14.5 5.9h2.9M3.3 8.2h3.5M7.3 8.2h4.5M15.4 10.5h2.0M3.3 12.8h1.6M5.9 12.8h3.4M10.7 12.8h2.4M14.6 12.8h2.8M10.9 15.1h4.2M16.3 15.1h1.0M8.4 17.4h4.8M9.3 19.7h4.8M4.8 22.0h3.2M9.0 22.0h1.7M3.8 24.3h1.9M7.4 24.3h2.8M10.8 24.3h4.7M12.2 26.6h2.7M8.0 28.9h4.9M14.1 28.9h3.3M3.8 31.2h1.6M13.2 31.2h2.4M4.6 33.5h4.5M16.1 33.5h1.3M11.5 35.8h3.3" stroke="#555" stroke-width="1.0" opacity="0.75" fill="none"/></svg><div class="t nm" style="left:63.10000000000002px;top:5.50px;font-size:15.7px;letter-spacing:-0.477px">Ernest Jewell Clark</div><div class="t dt" style="left:66.5px;top:28.50px;letter-spacing:-0.151px">1881-</div></div>
<div class="box" style="left:339.50px;top:663.95px;width:311.50px;height:42.60px"><svg class="ic" style="left:13.30px;top:3.30px;width:42.20px;height:40.20px;color:#000;" viewBox="15.75 9.62 67.5 63.5" preserveAspectRatio="none"><path d="M17 73 C18 66 22 63 27.5 60.5 C30 58 31 55 29.5 52 C26.5 49 26.5 46 29 42 C31.5 36 31 30 33 24 C35 14 41 11 49 11 C57 11 65 14 67 26 C68.5 32 67 37 70 42 C72.5 46 72 49 69 53 C67.5 56 69 58.5 72 60.5 C77 63 81 66 82 73" fill="#FDE6EE" stroke="#F79AB9" stroke-width="2.6"/></svg><div class="t nm" style="left:63.10000000000002px;top:5.50px;font-size:15.7px;letter-spacing:-0.374px">Marie Leah Josephine Soucy</div><div class="t dt" style="left:66.5px;top:28.50px;letter-spacing:0.027px">1885-1940</div></div>
<div class="box" style="left:549.10px;top:137.55px;width:311.60px;height:22.20px"><svg class="ic" style="left:13.00px;top:0.70px;width:23.20px;height:22.60px;color:#000;" viewBox="7.12 5.62 71.75 67.38" preserveAspectRatio="none"><path d="M9 73 C9 64 11 60 17 57.5 L31 53.5 C33.5 52.5 33.5 50 32.5 48 L29 38.5 C25 37 24 29 27.5 27 C25.5 15 33 7.5 43 7.5 C53 7.5 60.5 15 58.5 27 C62 29 61 37 57 38.5 L53.5 48 C52.5 50 52.5 52.5 55 53.5 L69 57.5 C75 60 77 64 77 73" fill="#CFE5F5" stroke="#4A9FDB" stroke-width="3.6"/></svg><div class="t nm" style="left:43.0px;top:4.25px;letter-spacing:-0.042px">Johnson S Worton</div></div>
<div class="box" style="left:549.10px;top:220.15px;width:311.60px;height:22.20px"><svg class="ic" style="left:13.00px;top:0.70px;width:23.20px;height:22.60px;color:#000;" viewBox="15.38 9.25 68.25 64.0" preserveAspectRatio="none"><path d="M17 73 C18 66 22 63 27.5 60.5 C30 58 31 55 29.5 52 C26.5 49 26.5 46 29 42 C31.5 36 31 30 33 24 C35 14 41 11 49 11 C57 11 65 14 67 26 C68.5 32 67 37 70 42 C72.5 46 72 49 69 53 C67.5 56 69 58.5 72 60.5 C77 63 81 66 82 73" fill="#FDE6EE" stroke="#F8A3C0" stroke-width="3.4"/></svg><div class="t nm" style="left:43.0px;top:4.25px;letter-spacing:-0.058px">Louisa (Alfretta) Boswell</div></div>
<div class="box" style="left:549.10px;top:302.75px;width:311.60px;height:22.20px"><svg class="ic" style="left:12.10px;top:3.40px;width:25.5px;height:14px" viewBox="0 0 25.5 14" preserveAspectRatio="none"><rect width="25.5" height="14" fill="#F7F7F7"/><path d="M1.4 1.0h2.5M5.6 1.0h1.0M8.3 1.0h1.3M10.9 1.0h1.2M13.5 1.0h2.8M17.1 1.0h2.0M20.3 1.0h4.7" stroke="#C9C9C9" stroke-width="0.8" opacity="1" fill="none"/><path d="M1.0 3.6h1.4M3.2 3.6h1.3M11.2 3.6h3.1M15.2 3.6h1.4M0.9 5.5h2.2M9.7 5.5h3.4M14.4 5.5h1.7M2.3 7.4h4.4M7.8 7.4h3.4M14.8 7.4h1.2M16.9 7.4h3.1M21.1 7.4h3.9M0.9 9.3h3.5M5.5 9.3h4.0M10.7 9.3h4.6M19.3 9.3h1.9M22.0 9.3h2.8M8.9 11.2h1.1M11.7 11.2h4.1M22.0 11.2h1.8" stroke="#9C9C9C" stroke-width="1.1" opacity="0.85" fill="none"/></svg><div class="t nm" style="left:43.0px;top:4.25px;letter-spacing:-0.255px">Peter Hicks</div><svg class="ic" style="left:290.20px;top:3.40px;width:16.00px;height:16.00px;color:#000;" viewBox="1.12 1.12 15.75 15.75" preserveAspectRatio="none"><circle cx="9" cy="9" r="7.8" fill="#CE1F2D"/><path fill="#fff" d="M7.6 3.6 H10.4 L9.9 10.4 H8.1 Z"/><circle cx="9" cy="12.9" r="1.45" fill="#fff"/></svg></div>
<div class="box" style="left:549.10px;top:385.35px;width:311.60px;height:22.20px"><svg class="ic" style="left:12.10px;top:3.40px;width:25.5px;height:14px" viewBox="0 0 25.5 14" preserveAspectRatio="none"><rect width="25.5" height="14" fill="#F7F7F7"/><path d="M1.4 1.0h2.5M5.6 1.0h1.0M8.3 1.0h1.3M10.9 1.0h1.2M13.5 1.0h2.8M17.1 1.0h2.0M20.3 1.0h4.7" stroke="#C9C9C9" stroke-width="0.8" opacity="1" fill="none"/><path d="M1.0 3.6h1.4M3.2 3.6h1.3M11.2 3.6h3.1M15.2 3.6h1.4M0.9 5.5h2.2M9.7 5.5h3.4M14.4 5.5h1.7M2.3 7.4h4.4M7.8 7.4h3.4M14.8 7.4h1.2M16.9 7.4h3.1M21.1 7.4h3.9M0.9 9.3h3.5M5.5 9.3h4.0M10.7 9.3h4.6M19.3 9.3h1.9M22.0 9.3h2.8M8.9 11.2h1.1M11.7 11.2h4.1M22.0 11.2h1.8" stroke="#9C9C9C" stroke-width="1.1" opacity="0.85" fill="none"/></svg><div class="t nm" style="left:43.0px;top:4.25px;letter-spacing:-0.089px">Mary F. Brewer</div><svg class="ic" style="left:270.30px;top:2.50px;width:17.80px;height:17.80px;color:#000;" viewBox="-0.12 -0.12 18.25 18.25" preserveAspectRatio="none"><circle cx="9" cy="9" r="7.9" fill="#DFC12C"/><circle cx="9" cy="9" r="8.4" fill="none" stroke="#48C4E8" stroke-width="1.3"/><path fill="#FCF8E3" d="M9 3.6 C6.6 3.6 5 5.4 5 7.5 C5 9.1 5.9 10 6.6 10.9 C7 11.4 7.2 11.9 7.3 12.5 H10.7 C10.8 11.9 11 11.4 11.4 10.9 C12.1 10 13 9.1 13 7.5 C13 5.4 11.4 3.6 9 3.6 Z M7.4 13.1 H10.6 V14 Q10.6 14.9 9.7 14.9 H8.3 Q7.4 14.9 7.4 14 Z"/><path fill="none" stroke="#E6CF58" stroke-width="0.7" d="M7.6 9.6 Q6.4 8.4 6.6 7 Q7 5.4 8.6 5"/></svg></div>
<div class="box" style="left:549.10px;top:467.95px;width:311.60px;height:22.20px"><div class="a" style="left:18.90px;top:-0.30px;width:11.2px;height:22.8px;background:#EDEDED;border:1px solid #6A6A6A"></div><div class="t nm" style="left:43.0px;top:4.25px;letter-spacing:-0.303px">Frank H Clark</div><svg class="ic" style="left:271.20px;top:3.40px;width:16.00px;height:16.00px;color:#000;" viewBox="1.12 1.0 15.75 16.0" preserveAspectRatio="none"><circle cx="9" cy="9" r="7.9" fill="#DFC12C"/><path fill="#FCF8E3" d="M9 3.6 C6.6 3.6 5 5.4 5 7.5 C5 9.1 5.9 10 6.6 10.9 C7 11.4 7.2 11.9 7.3 12.5 H10.7 C10.8 11.9 11 11.4 11.4 10.9 C12.1 10 13 9.1 13 7.5 C13 5.4 11.4 3.6 9 3.6 Z M7.4 13.1 H10.6 V14 Q10.6 14.9 9.7 14.9 H8.3 Q7.4 14.9 7.4 14 Z"/><path fill="none" stroke="#E6CF58" stroke-width="0.7" d="M7.6 9.6 Q6.4 8.4 6.6 7 Q7 5.4 8.6 5"/></svg></div>
<div class="box" style="left:549.10px;top:550.55px;width:311.60px;height:22.20px"><svg class="ic" style="left:13.00px;top:0.70px;width:23.20px;height:22.60px;color:#000;" viewBox="15.38 9.25 68.25 64.0" preserveAspectRatio="none"><path d="M17 73 C18 66 22 63 27.5 60.5 C30 58 31 55 29.5 52 C26.5 49 26.5 46 29 42 C31.5 36 31 30 33 24 C35 14 41 11 49 11 C57 11 65 14 67 26 C68.5 32 67 37 70 42 C72.5 46 72 49 69 53 C67.5 56 69 58.5 72 60.5 C77 63 81 66 82 73" fill="#FDE6EE" stroke="#F8A3C0" stroke-width="3.4"/></svg><div class="t nm" style="left:43.0px;top:4.25px;letter-spacing:-0.163px">Emma Amelia Jewell</div><svg class="ic" style="left:271.20px;top:3.40px;width:16.00px;height:16.00px;color:#000;" viewBox="1.12 1.0 15.75 16.0" preserveAspectRatio="none"><circle cx="9" cy="9" r="7.9" fill="#DFC12C"/><path fill="#FCF8E3" d="M9 3.6 C6.6 3.6 5 5.4 5 7.5 C5 9.1 5.9 10 6.6 10.9 C7 11.4 7.2 11.9 7.3 12.5 H10.7 C10.8 11.9 11 11.4 11.4 10.9 C12.1 10 13 9.1 13 7.5 C13 5.4 11.4 3.6 9 3.6 Z M7.4 13.1 H10.6 V14 Q10.6 14.9 9.7 14.9 H8.3 Q7.4 14.9 7.4 14 Z"/><path fill="none" stroke="#E6CF58" stroke-width="0.7" d="M7.6 9.6 Q6.4 8.4 6.6 7 Q7 5.4 8.6 5"/></svg></div>
<div class="box" style="left:549.10px;top:633.15px;width:311.60px;height:22.20px"><svg class="ic" style="left:13.00px;top:0.70px;width:23.20px;height:22.60px;color:#000;" viewBox="7.12 5.62 71.75 67.38" preserveAspectRatio="none"><path d="M9 73 C9 64 11 60 17 57.5 L31 53.5 C33.5 52.5 33.5 50 32.5 48 L29 38.5 C25 37 24 29 27.5 27 C25.5 15 33 7.5 43 7.5 C53 7.5 60.5 15 58.5 27 C62 29 61 37 57 38.5 L53.5 48 C52.5 50 52.5 52.5 55 53.5 L69 57.5 C75 60 77 64 77 73" fill="#CFE5F5" stroke="#4A9FDB" stroke-width="3.6"/></svg><div class="t nm" style="left:43.0px;top:4.25px;letter-spacing:-0.093px">Philippe Soucy</div><svg class="ic" style="left:271.20px;top:3.40px;width:16.00px;height:16.00px;color:#000;" viewBox="1.12 1.0 15.75 16.0" preserveAspectRatio="none"><circle cx="9" cy="9" r="7.9" fill="#DFC12C"/><path fill="#FCF8E3" d="M9 3.6 C6.6 3.6 5 5.4 5 7.5 C5 9.1 5.9 10 6.6 10.9 C7 11.4 7.2 11.9 7.3 12.5 H10.7 C10.8 11.9 11 11.4 11.4 10.9 C12.1 10 13 9.1 13 7.5 C13 5.4 11.4 3.6 9 3.6 Z M7.4 13.1 H10.6 V14 Q10.6 14.9 9.7 14.9 H8.3 Q7.4 14.9 7.4 14 Z"/><path fill="none" stroke="#E6CF58" stroke-width="0.7" d="M7.6 9.6 Q6.4 8.4 6.6 7 Q7 5.4 8.6 5"/></svg></div>
<div class="box" style="left:549.10px;top:715.75px;width:311.60px;height:22.20px"><svg class="ic" style="left:13.00px;top:0.70px;width:23.20px;height:22.60px;color:#000;" viewBox="15.38 9.25 68.25 64.0" preserveAspectRatio="none"><path d="M17 73 C18 66 22 63 27.5 60.5 C30 58 31 55 29.5 52 C26.5 49 26.5 46 29 42 C31.5 36 31 30 33 24 C35 14 41 11 49 11 C57 11 65 14 67 26 C68.5 32 67 37 70 42 C72.5 46 72 49 69 53 C67.5 56 69 58.5 72 60.5 C77 63 81 66 82 73" fill="#FDE6EE" stroke="#F8A3C0" stroke-width="3.4"/></svg><div class="t nm" style="left:43.0px;top:4.25px;letter-spacing:-0.218px">Josephine Sansoucie</div></div>
<div class="box" style="left:895.00px;top:117.10px;width:291.50px;height:21.80px"><svg class="ic" style="left:13.00px;top:0.70px;width:23.20px;height:22.60px;color:#000;" viewBox="7.12 5.62 71.75 67.38" preserveAspectRatio="none"><path d="M9 73 C9 64 11 60 17 57.5 L31 53.5 C33.5 52.5 33.5 50 32.5 48 L29 38.5 C25 37 24 29 27.5 27 C25.5 15 33 7.5 43 7.5 C53 7.5 60.5 15 58.5 27 C62 29 61 37 57 38.5 L53.5 48 C52.5 50 52.5 52.5 55 53.5 L69 57.5 C75 60 77 64 77 73" fill="#CFE5F5" stroke="#4A9FDB" stroke-width="3.6"/></svg><div class="t nm" style="left:43.0px;top:4.05px;letter-spacing:0.174px">Meshack Worton (Wharton/Warton,</div><svg class="ic" style="left:250.80px;top:3.20px;width:16.00px;height:16.00px;color:#000;" viewBox="1.12 1.0 15.75 16.0" preserveAspectRatio="none"><circle cx="9" cy="9" r="7.9" fill="#DFC12C"/><path fill="#FCF8E3" d="M9 3.6 C6.6 3.6 5 5.4 5 7.5 C5 9.1 5.9 10 6.6 10.9 C7 11.4 7.2 11.9 7.3 12.5 H10.7 C10.8 11.9 11 11.4 11.4 10.9 C12.1 10 13 9.1 13 7.5 C13 5.4 11.4 3.6 9 3.6 Z M7.4 13.1 H10.6 V14 Q10.6 14.9 9.7 14.9 H8.3 Q7.4 14.9 7.4 14 Z"/><path fill="none" stroke="#E6CF58" stroke-width="0.7" d="M7.6 9.6 Q6.4 8.4 6.6 7 Q7 5.4 8.6 5"/></svg></div>
<svg class="ic" style="left:1194.20px;top:120.70px;width:7.70px;height:13.50px;color:#111;" viewBox="0.0 0.0 7.12 13.12" preserveAspectRatio="none"><path fill="none" stroke="currentColor" stroke-width="1.9" stroke-linecap="round" stroke-linejoin="round" d="M1 1 L6.2 6.6 L1 12.2"/></svg>
<div class="box" style="left:895.00px;top:158.40px;width:291.50px;height:21.80px"><svg class="ic" style="left:13.00px;top:0.70px;width:23.20px;height:22.60px;color:#000;" viewBox="15.38 9.25 68.25 64.0" preserveAspectRatio="none"><path d="M17 73 C18 66 22 63 27.5 60.5 C30 58 31 55 29.5 52 C26.5 49 26.5 46 29 42 C31.5 36 31 30 33 24 C35 14 41 11 49 11 C57 11 65 14 67 26 C68.5 32 67 37 70 42 C72.5 46 72 49 69 53 C67.5 56 69 58.5 72 60.5 C77 63 81 66 82 73" fill="#FDE6EE" stroke="#F8A3C0" stroke-width="3.4"/></svg><div class="t nm" style="left:43.0px;top:4.05px;letter-spacing:-0.042px">Marilla (Mesalli) Boswell</div><svg class="ic" style="left:250.80px;top:3.20px;width:16.00px;height:16.00px;color:#000;" viewBox="1.12 1.0 15.75 16.0" preserveAspectRatio="none"><circle cx="9" cy="9" r="7.9" fill="#DFC12C"/><path fill="#FCF8E3" d="M9 3.6 C6.6 3.6 5 5.4 5 7.5 C5 9.1 5.9 10 6.6 10.9 C7 11.4 7.2 11.9 7.3 12.5 H10.7 C10.8 11.9 11 11.4 11.4 10.9 C12.1 10 13 9.1 13 7.5 C13 5.4 11.4 3.6 9 3.6 Z M7.4 13.1 H10.6 V14 Q10.6 14.9 9.7 14.9 H8.3 Q7.4 14.9 7.4 14 Z"/><path fill="none" stroke="#E6CF58" stroke-width="0.7" d="M7.6 9.6 Q6.4 8.4 6.6 7 Q7 5.4 8.6 5"/></svg></div>
<svg class="ic" style="left:1194.20px;top:162.00px;width:7.70px;height:13.50px;color:#111;" viewBox="0.0 0.0 7.12 13.12" preserveAspectRatio="none"><path fill="none" stroke="currentColor" stroke-width="1.9" stroke-linecap="round" stroke-linejoin="round" d="M1 1 L6.2 6.6 L1 12.2"/></svg>
<div class="box" style="left:895.00px;top:199.70px;width:291.50px;height:21.80px"><svg class="ic" style="left:13.00px;top:0.70px;width:23.20px;height:22.60px;color:#000;" viewBox="7.12 5.62 71.75 67.38" preserveAspectRatio="none"><path d="M9 73 C9 64 11 60 17 57.5 L31 53.5 C33.5 52.5 33.5 50 32.5 48 L29 38.5 C25 37 24 29 27.5 27 C25.5 15 33 7.5 43 7.5 C53 7.5 60.5 15 58.5 27 C62 29 61 37 57 38.5 L53.5 48 C52.5 50 52.5 52.5 55 53.5 L69 57.5 C75 60 77 64 77 73" fill="#8DB9DC" stroke="#3B8FD0" stroke-width="3.6"/></svg><svg class="ic" style="left:45.70px;top:4.00px;width:13.40px;height:13.40px;color:#0A8171;" viewBox="0.12 0.12 13.75 13.75" preserveAspectRatio="none"><path fill="none" stroke="currentColor" stroke-width="1.8" d="M7 0.2 V13.8 M0.2 7 H13.8"/></svg><div class="t nm" style="left:68.0px;top:4.05px;letter-spacing:-0.159px">Add Father</div></div>
<div class="box" style="left:895.00px;top:241.00px;width:291.50px;height:21.80px"><svg class="ic" style="left:13.00px;top:0.70px;width:23.20px;height:22.60px;color:#000;" viewBox="15.38 9.25 68.25 64.0" preserveAspectRatio="none"><path d="M17 73 C18 66 22 63 27.5 60.5 C30 58 31 55 29.5 52 C26.5 49 26.5 46 29 42 C31.5 36 31 30 33 24 C35 14 41 11 49 11 C57 11 65 14 67 26 C68.5 32 67 37 70 42 C72.5 46 72 49 69 53 C67.5 56 69 58.5 72 60.5 C77 63 81 66 82 73" fill="#F3C0D0" stroke="#F49CBB" stroke-width="3.4"/></svg><svg class="ic" style="left:45.70px;top:4.00px;width:13.40px;height:13.40px;color:#0A8171;" viewBox="0.12 0.12 13.75 13.75" preserveAspectRatio="none"><path fill="none" stroke="currentColor" stroke-width="1.8" d="M7 0.2 V13.8 M0.2 7 H13.8"/></svg><div class="t nm" style="left:68.0px;top:4.05px;letter-spacing:0.352px">Add Mother</div></div>
<div class="box" style="left:895.00px;top:282.30px;width:291.50px;height:21.80px"><svg class="ic" style="left:11.60px;top:-0.30px;width:24.8px;height:22.400000000000002px" viewBox="0 0 24.8 22.400000000000002" preserveAspectRatio="none"><rect width="24.8" height="22.400000000000002" fill="#C9C9C9"/><path d="M2.5 3.0h3.2M7.0 3.0h3.5M11.1 3.0h4.3M16.3 3.0h5.0M3.0 5.2h3.6M7.9 5.2h4.5M13.8 5.2h3.7M19.0 5.2h3.4M13.2 7.4h4.2M19.1 7.4h3.7M2.4 9.6h4.9M8.6 9.6h2.2M7.2 14.0h4.2M17.9 14.0h3.9M9.9 16.2h1.8M13.0 16.2h1.6M20.2 16.2h2.5M8.0 18.4h4.8M13.9 18.4h3.9M18.7 18.4h4.1" stroke="#9E9E9E" stroke-width="0.8" opacity="1" fill="none"/><path d="M22.3 22.400000000000002 h2.5 v-2.5 z" fill="#333"/></svg><div class="t nm" style="left:43.0px;top:4.05px;letter-spacing:-0.171px">Cornelius Hicks</div><svg class="ic" style="left:270.30px;top:3.20px;width:16.00px;height:16.00px;color:#000;" viewBox="1.12 1.12 15.75 15.75" preserveAspectRatio="none"><circle cx="9" cy="9" r="7.8" fill="#CE1F2D"/><path fill="#fff" d="M7.6 3.6 H10.4 L9.9 10.4 H8.1 Z"/><circle cx="9" cy="12.9" r="1.45" fill="#fff"/></svg></div>
<svg class="ic" style="left:1194.20px;top:285.90px;width:7.70px;height:13.50px;color:#111;" viewBox="0.0 0.0 7.12 13.12" preserveAspectRatio="none"><path fill="none" stroke="currentColor" stroke-width="1.9" stroke-linecap="round" stroke-linejoin="round" d="M1 1 L6.2 6.6 L1 12.2"/></svg>
<div class="box" style="left:895.00px;top:323.60px;width:291.50px;height:21.80px"><div class="a" style="left:12.00px;top:4.90px;width:25.5px;height:12px;background:#C4C4C4;border:1px solid #9A9A9A"></div><div class="a" style="left:24.75px;top:5.90px;width:11.75px;height:10px;background:#D4D4D4"></div><div class="t nm" style="left:43.0px;top:4.05px;letter-spacing:-0.127px">Vashti Mary Stanley</div></div>
<svg class="ic" style="left:1194.20px;top:327.20px;width:7.70px;height:13.50px;color:#111;" viewBox="0.0 0.0 7.12 13.12" preserveAspectRatio="none"><path fill="none" stroke="currentColor" stroke-width="1.9" stroke-linecap="round" stroke-linejoin="round" d="M1 1 L6.2 6.6 L1 12.2"/></svg>
<div class="box" style="left:895.00px;top:364.90px;width:291.50px;height:21.80px"><div class="a" style="left:12.00px;top:4.90px;width:25.5px;height:12px;background:#B9E2B6"></div><div class="a" style="left:12.00px;top:4.90px;width:3.5px;height:12px;background:#93AA8E"></div><div class="a" style="left:12.00px;top:4.90px;width:25.5px;height:1.5px;background:#DDEBD6"></div><div class="t nm" style="left:43.0px;top:4.05px;letter-spacing:-0.447px">Elias Brewer</div></div>
<svg class="ic" style="left:1194.20px;top:368.50px;width:7.70px;height:13.50px;color:#111;" viewBox="0.0 0.0 7.12 13.12" preserveAspectRatio="none"><path fill="none" stroke="currentColor" stroke-width="1.9" stroke-linecap="round" stroke-linejoin="round" d="M1 1 L6.2 6.6 L1 12.2"/></svg>
<div class="box" style="left:895.00px;top:406.20px;width:291.50px;height:21.80px"><svg class="ic" style="left:13.00px;top:0.70px;width:23.20px;height:22.60px;color:#000;" viewBox="15.38 9.25 68.25 64.0" preserveAspectRatio="none"><path d="M17 73 C18 66 22 63 27.5 60.5 C30 58 31 55 29.5 52 C26.5 49 26.5 46 29 42 C31.5 36 31 30 33 24 C35 14 41 11 49 11 C57 11 65 14 67 26 C68.5 32 67 37 70 42 C72.5 46 72 49 69 53 C67.5 56 69 58.5 72 60.5 C77 63 81 66 82 73" fill="#FDE6EE" stroke="#F8A3C0" stroke-width="3.4"/></svg><div class="t nm" style="left:43.0px;top:4.05px;letter-spacing:0.194px">Harriet Ann Worton (Wharton)</div></div>
<svg class="ic" style="left:1194.20px;top:409.80px;width:7.70px;height:13.50px;color:#111;" viewBox="0.0 0.0 7.12 13.12" preserveAspectRatio="none"><path fill="none" stroke="currentColor" stroke-width="1.9" stroke-linecap="round" stroke-linejoin="round" d="M1 1 L6.2 6.6 L1 12.2"/></svg>
<div class="box" style="left:895.00px;top:447.50px;width:291.50px;height:21.80px"><div class="a" style="left:19.70px;top:-0.30px;width:10.3px;height:22.400000000000002px;background:#D0D0D0;border:1px solid #7A7A7A;border-top:none;border-bottom:none"></div><div class="t nm" style="left:43.0px;top:4.05px;letter-spacing:-0.175px">David W. Clark</div></div>
<svg class="ic" style="left:1194.20px;top:451.10px;width:7.70px;height:13.50px;color:#111;" viewBox="0.0 0.0 7.12 13.12" preserveAspectRatio="none"><path fill="none" stroke="currentColor" stroke-width="1.9" stroke-linecap="round" stroke-linejoin="round" d="M1 1 L6.2 6.6 L1 12.2"/></svg>
<div class="box" style="left:895.00px;top:488.80px;width:291.50px;height:21.80px"><div class="a" style="left:19.70px;top:-0.30px;width:10.3px;height:22.400000000000002px;background:#D0D0D0;border:1px solid #7A7A7A;border-top:none;border-bottom:none"></div><div class="t nm" style="left:43.0px;top:4.05px;letter-spacing:-0.301px">Celestia Clark</div></div>
<svg class="ic" style="left:1194.20px;top:492.40px;width:7.70px;height:13.50px;color:#111;" viewBox="0.0 0.0 7.12 13.12" preserveAspectRatio="none"><path fill="none" stroke="currentColor" stroke-width="1.9" stroke-linecap="round" stroke-linejoin="round" d="M1 1 L6.2 6.6 L1 12.2"/></svg>
<div class="box" style="left:895.50px;top:530.60px;width:290.50px;height:20.80px"><svg class="ic" style="left:12.50px;top:0.20px;width:23.20px;height:22.60px;color:#000;" viewBox="7.12 5.62 71.75 67.38" preserveAspectRatio="none"><path d="M9 73 C9 64 11 60 17 57.5 L31 53.5 C33.5 52.5 33.5 50 32.5 48 L29 38.5 C25 37 24 29 27.5 27 C25.5 15 33 7.5 43 7.5 C53 7.5 60.5 15 58.5 27 C62 29 61 37 57 38.5 L53.5 48 C52.5 50 52.5 52.5 55 53.5 L69 57.5 C75 60 77 64 77 73" fill="#8DB9DC" stroke="#3B8FD0" stroke-width="3.6"/></svg><div class="t nm" style="left:42.5px;top:3.55px;letter-spacing:-0.350px">Ebenezer Huse Jewell</div><svg class="ic" style="left:249.40px;top:1.80px;width:17.80px;height:17.80px;color:#000;" viewBox="-0.12 -0.12 18.25 18.25" preserveAspectRatio="none"><circle cx="9" cy="9" r="7.9" fill="#DFC12C"/><circle cx="9" cy="9" r="8.4" fill="none" stroke="#48C4E8" stroke-width="1.3"/><path fill="#FCF8E3" d="M9 3.6 C6.6 3.6 5 5.4 5 7.5 C5 9.1 5.9 10 6.6 10.9 C7 11.4 7.2 11.9 7.3 12.5 H10.7 C10.8 11.9 11 11.4 11.4 10.9 C12.1 10 13 9.1 13 7.5 C13 5.4 11.4 3.6 9 3.6 Z M7.4 13.1 H10.6 V14 Q10.6 14.9 9.7 14.9 H8.3 Q7.4 14.9 7.4 14 Z"/><path fill="none" stroke="#E6CF58" stroke-width="0.7" d="M7.6 9.6 Q6.4 8.4 6.6 7 Q7 5.4 8.6 5"/></svg><svg class="ic" style="left:271.10px;top:2.50px;width:16.40px;height:16.40px;color:#000;" viewBox="0.38 0.38 17.25 17.25" preserveAspectRatio="none"><circle cx="9" cy="9" r="8" fill="none" stroke="#F4FBFA" stroke-width="1.1"/></svg></div>
<svg class="ic" style="left:1194.20px;top:533.70px;width:7.70px;height:13.50px;color:#111;" viewBox="0.0 0.0 7.12 13.12" preserveAspectRatio="none"><path fill="none" stroke="currentColor" stroke-width="1.9" stroke-linecap="round" stroke-linejoin="round" d="M1 1 L6.2 6.6 L1 12.2"/></svg>
<div class="box" style="left:895.00px;top:571.40px;width:291.50px;height:21.80px"><svg class="ic" style="left:13.00px;top:0.70px;width:23.20px;height:22.60px;color:#000;" viewBox="15.38 9.25 68.25 64.0" preserveAspectRatio="none"><path d="M17 73 C18 66 22 63 27.5 60.5 C30 58 31 55 29.5 52 C26.5 49 26.5 46 29 42 C31.5 36 31 30 33 24 C35 14 41 11 49 11 C57 11 65 14 67 26 C68.5 32 67 37 70 42 C72.5 46 72 49 69 53 C67.5 56 69 58.5 72 60.5 C77 63 81 66 82 73" fill="#FDE6EE" stroke="#F8A3C0" stroke-width="3.4"/></svg><div class="t nm" style="left:43.0px;top:4.05px;letter-spacing:-0.339px">Laura E Currier</div></div>
<svg class="ic" style="left:1194.20px;top:575.00px;width:7.70px;height:13.50px;color:#111;" viewBox="0.0 0.0 7.12 13.12" preserveAspectRatio="none"><path fill="none" stroke="currentColor" stroke-width="1.9" stroke-linecap="round" stroke-linejoin="round" d="M1 1 L6.2 6.6 L1 12.2"/></svg>
<div class="box" style="left:895.00px;top:612.70px;width:291.50px;height:21.80px"><svg class="ic" style="left:13.00px;top:0.70px;width:23.20px;height:22.60px;color:#000;" viewBox="7.12 5.62 71.75 67.38" preserveAspectRatio="none"><path d="M9 73 C9 64 11 60 17 57.5 L31 53.5 C33.5 52.5 33.5 50 32.5 48 L29 38.5 C25 37 24 29 27.5 27 C25.5 15 33 7.5 43 7.5 C53 7.5 60.5 15 58.5 27 C62 29 61 37 57 38.5 L53.5 48 C52.5 50 52.5 52.5 55 53.5 L69 57.5 C75 60 77 64 77 73" fill="#CFE5F5" stroke="#4A9FDB" stroke-width="3.6"/></svg><div class="t nm" style="left:43.0px;top:4.05px;letter-spacing:-0.349px">Joseph Soucy</div></div>
<div class="box" style="left:895.00px;top:654.00px;width:291.50px;height:21.80px"><svg class="ic" style="left:13.00px;top:0.70px;width:23.20px;height:22.60px;color:#000;" viewBox="15.38 9.25 68.25 64.0" preserveAspectRatio="none"><path d="M17 73 C18 66 22 63 27.5 60.5 C30 58 31 55 29.5 52 C26.5 49 26.5 46 29 42 C31.5 36 31 30 33 24 C35 14 41 11 49 11 C57 11 65 14 67 26 C68.5 32 67 37 70 42 C72.5 46 72 49 69 53 C67.5 56 69 58.5 72 60.5 C77 63 81 66 82 73" fill="#FDE6EE" stroke="#F8A3C0" stroke-width="3.4"/></svg><div class="t nm" style="left:43.0px;top:4.05px;letter-spacing:-0.027px">Odile&nbsp; Hamel</div></div>
<div class="box" style="left:895.00px;top:695.30px;width:291.50px;height:21.80px"><svg class="ic" style="left:13.00px;top:0.70px;width:23.20px;height:22.60px;color:#000;" viewBox="7.12 5.62 71.75 67.38" preserveAspectRatio="none"><path d="M9 73 C9 64 11 60 17 57.5 L31 53.5 C33.5 52.5 33.5 50 32.5 48 L29 38.5 C25 37 24 29 27.5 27 C25.5 15 33 7.5 43 7.5 C53 7.5 60.5 15 58.5 27 C62 29 61 37 57 38.5 L53.5 48 C52.5 50 52.5 52.5 55 53.5 L69 57.5 C75 60 77 64 77 73" fill="#8DB9DC" stroke="#3B8FD0" stroke-width="3.6"/></svg><svg class="ic" style="left:45.70px;top:4.00px;width:13.40px;height:13.40px;color:#0A8171;" viewBox="0.12 0.12 13.75 13.75" preserveAspectRatio="none"><path fill="none" stroke="currentColor" stroke-width="1.8" d="M7 0.2 V13.8 M0.2 7 H13.8"/></svg><div class="t nm" style="left:68.0px;top:4.05px;letter-spacing:-0.159px">Add Father</div></div>
<div class="box" style="left:895.00px;top:736.60px;width:291.50px;height:21.80px"><svg class="ic" style="left:13.00px;top:0.70px;width:23.20px;height:22.60px;color:#000;" viewBox="15.38 9.25 68.25 64.0" preserveAspectRatio="none"><path d="M17 73 C18 66 22 63 27.5 60.5 C30 58 31 55 29.5 52 C26.5 49 26.5 46 29 42 C31.5 36 31 30 33 24 C35 14 41 11 49 11 C57 11 65 14 67 26 C68.5 32 67 37 70 42 C72.5 46 72 49 69 53 C67.5 56 69 58.5 72 60.5 C77 63 81 66 82 73" fill="#F3C0D0" stroke="#F49CBB" stroke-width="3.4"/></svg><svg class="ic" style="left:45.70px;top:4.00px;width:13.40px;height:13.40px;color:#0A8171;" viewBox="0.12 0.12 13.75 13.75" preserveAspectRatio="none"><path fill="none" stroke="currentColor" stroke-width="1.8" d="M7 0.2 V13.8 M0.2 7 H13.8"/></svg><div class="t nm" style="left:68.0px;top:4.05px;letter-spacing:0.352px">Add Mother</div></div>
<div class="a" style="left:1217.2px;top:37px;width:318.79999999999995px;height:732px;background:#fff;border-left:1.3px solid #1F8C7D"></div>
<div class="a" style="left:1218.3px;top:37px;width:317.7px;height:39px;background:#A4DCD3"></div>
<div class="a" style="left:1218.3px;top:76px;width:317.7px;height:1.5px;background:#2B9183"></div>
<div class="t" style="left:1223px;top:50px;font-size:17.2px;color:#111;letter-spacing:-0.126px">Ebenezer Huse Jewell</div>
<div class="a" style="left:1218.3px;top:77.5px;width:317.7px;height:108.5px;background:#D1EDE8"></div>
<div class="a" style="left:1227px;top:85.5px;width:74px;height:69.6px;overflow:hidden"><svg class="ic" style="left:1.20px;top:1.50px;width:71.40px;height:69.00px;color:#000;" viewBox="8.0 6.5 70.0 66.5" preserveAspectRatio="none"><path d="M9 73 C9 64 11 60 17 57.5 L31 53.5 C33.5 52.5 33.5 50 32.5 48 L29 38.5 C25 37 24 29 27.5 27 C25.5 15 33 7.5 43 7.5 C53 7.5 60.5 15 58.5 27 C62 29 61 37 57 38.5 L53.5 48 C52.5 50 52.5 52.5 55 53.5 L69 57.5 C75 60 77 64 77 73" fill="#A9D3E3" stroke="#0F75C4" stroke-width="2"/></svg></div>
<div class="t" style="left:1311px;top:84.6px;font-size:11.6px;color:#222;letter-spacing:-0.050px">1818-1857</div>
<svg class="ic" style="left:1491.60px;top:133.90px;width:18.80px;height:18.80px;color:#000;" viewBox="-0.12 -0.12 18.25 18.25" preserveAspectRatio="none"><circle cx="9" cy="9" r="7.9" fill="#DFC12C"/><circle cx="9" cy="9" r="8.4" fill="none" stroke="#48C4E8" stroke-width="1.3"/><path fill="#FCF8E3" d="M9 3.6 C6.6 3.6 5 5.4 5 7.5 C5 9.1 5.9 10 6.6 10.9 C7 11.4 7.2 11.9 7.3 12.5 H10.7 C10.8 11.9 11 11.4 11.4 10.9 C12.1 10 13 9.1 13 7.5 C13 5.4 11.4 3.6 9 3.6 Z M7.4 13.1 H10.6 V14 Q10.6 14.9 9.7 14.9 H8.3 Q7.4 14.9 7.4 14 Z"/><path fill="none" stroke="#E6CF58" stroke-width="0.7" d="M7.6 9.6 Q6.4 8.4 6.6 7 Q7 5.4 8.6 5"/></svg>
<svg class="ic" style="left:1513.00px;top:134.30px;width:18.00px;height:18.00px;color:#000;" viewBox="0.38 0.38 17.25 17.25" preserveAspectRatio="none"><circle cx="9" cy="9" r="8" fill="none" stroke="#F4FBFA" stroke-width="1.1"/></svg>
<div class="a" style="left:1221.5px;top:161px;width:100.5px;height:23px;background:#FFC95C;border-radius:5px;border:1px dotted #9C8040"></div>
<div class="t" style="left:1221.5px;top:167.5px;width:100.5px;text-align:center;font-size:11.4px;color:#111;letter-spacing:0.025px">Details</div>
<div class="a" style="left:1323.5px;top:162px;width:1.5px;height:21px;background:#2B9183"></div>
<div class="a" style="left:1429px;top:162px;width:1.5px;height:21px;background:#2B9183"></div>
<div class="t" style="left:1328px;top:167.5px;width:101px;text-align:center;font-size:11.4px;color:#111;letter-spacing:-0.192px">Parents: 1</div>
<div class="t" style="left:1433px;top:167.5px;width:103px;text-align:center;font-size:11.4px;color:#111;letter-spacing:-0.200px">Spouses: 1</div>
<div class="a" style="left:1218.3px;top:186px;width:317.7px;height:2px;background:#3A9A8C"></div>
<div class="a" style="left:1218.3px;top:188px;width:317.7px;height:27.4px;background:#DCEDFB"></div>
<div class="a" style="left:1220px;top:189px;width:314.5px;height:25.4px;border:1px dashed #9AA5AD;border-radius:4px"></div>
<div class="a" style="left:1218.3px;top:215.3px;width:317.7px;height:1.8px;background:#3A9A8C"></div>
<svg class="ic" style="left:1221.60px;top:193.60px;width:15.10px;height:15.10px;color:#0A8171;" viewBox="0.25 0.25 19.38 19.5" preserveAspectRatio="none"><path fill="none" stroke="currentColor" stroke-width="1.9" stroke-linecap="round" stroke-linejoin="round" d="M1.2 18.8 L2.6 12.6 L13.2 2 Q14.8 0.6 16.4 2 L18 3.6 Q19.4 5.2 18 6.8 L7.4 17.4 Z M2.8 12.8 L7.2 17.2 M11.4 4 L16 8.6"/></svg>
<div class="t" style="left:1243.5px;top:196.9px;font-size:11.4px;color:#111;letter-spacing:-0.035px">Edit</div>
<div class="t ev" style="left:1223.5px;top:221.3px;letter-spacing:0.038px"><b>Birth</b>&nbsp; 13 Dec 1818 (age 0)</div>
<div class="t ev" style="left:1238px;top:237.5px;letter-spacing:0.256px">Contoocook, Hopkinton, Merrimack, New Hampshire,...</div>
<div class="a" style="left:1218.3px;top:249.6px;width:317.7px;height:1px;background:#DCDCDC"></div>
<div class="t ev" style="left:1223.5px;top:254.2px;letter-spacing:0.033px"><b>Marriage</b>&nbsp; 2 Sep 1845 (age 26)</div>
<div class="t ev" style="left:1238px;top:270.4px;letter-spacing:0.134px">New Hampshire, United States</div>
<div class="a" style="left:1218.3px;top:282.5px;width:317.7px;height:1px;background:#DCDCDC"></div>
<div class="t ev" style="left:1223.5px;top:287.2px;letter-spacing:-0.087px"><b>Residence</b>&nbsp; 1850 (age 32)</div>
<div class="t ev" style="left:1238px;top:303.4px;letter-spacing:0.220px">Hillsborough, Hillsborough, New Hampshire, USA</div>
<div class="a" style="left:1218.3px;top:315.5px;width:317.7px;height:1px;background:#DCDCDC"></div>
<div class="t ev" style="left:1223.5px;top:320.2px;letter-spacing:-0.087px"><b>Residence</b>&nbsp; 1855 (age 37)</div>
<div class="t ev" style="left:1238px;top:336.4px;letter-spacing:0.134px">Relation to Head of House: Head; Hornellsville, Steub...</div>
<div class="a" style="left:1218.3px;top:348.4px;width:317.7px;height:1px;background:#DCDCDC"></div>
<div class="t ev" style="left:1223.5px;top:353.1px;letter-spacing:0.084px"><b>Occupation</b>&nbsp; 1855 (age 37)</div>
<div class="t ev" style="left:1238px;top:369.3px;letter-spacing:0.068px">Engineer; Hornellsville, Steuben, New York, USA</div>
<div class="a" style="left:1218.3px;top:381.4px;width:317.7px;height:1px;background:#DCDCDC"></div>
<div class="t ev" style="left:1223.5px;top:386.1px;letter-spacing:0.005px"><b>Death</b>&nbsp; 7 Feb 1857 (age 38)</div>
<div class="t ev" style="left:1238px;top:402.2px;letter-spacing:0.041px">Joliet, Will, Illinois, USA</div>
<div class="a" style="left:1218.3px;top:414.3px;width:317.7px;height:1px;background:#DCDCDC"></div>
<div class="a" style="left:1218.3px;top:487.5px;width:317.7px;height:1.2px;background:#2B9183"></div>
<div class="a" style="left:1218.3px;top:488.7px;width:317.7px;height:8.3px;background:#E6F5F2"></div>
<div class="a" style="left:1361.0px;top:490.6px;width:4px;height:4px;border-radius:2px;background:#A4DCD3"></div>
<div class="a" style="left:1371.3px;top:490.6px;width:4px;height:4px;border-radius:2px;background:#A4DCD3"></div>
<div class="a" style="left:1381.6px;top:490.6px;width:4px;height:4px;border-radius:2px;background:#A4DCD3"></div>
<div class="a" style="left:1391.9px;top:490.6px;width:4px;height:4px;border-radius:2px;background:#A4DCD3"></div>
<div class="a" style="left:1218.3px;top:497px;width:317.7px;height:1.2px;background:#2B9183"></div>
<div class="a" style="left:1218.3px;top:498.2px;width:317.7px;height:39px;background:#A4DCD3"></div>
<div class="a" style="left:1218.3px;top:537px;width:317.7px;height:1.8px;background:#0A8171"></div>
<div class="t" style="left:1223px;top:510.5px;font-size:17.2px;color:#111;letter-spacing:0.071px">Index</div>
<svg class="ic" style="left:1514.20px;top:505.00px;width:6.00px;height:24.50px;color:#00796B;" viewBox="0.88 0.5 6.25 24.0" preserveAspectRatio="none"><circle fill="currentColor" cx="4" cy="3.6" r="3.1"/><circle fill="currentColor" cx="4" cy="12.5" r="3.1"/><circle fill="currentColor" cx="4" cy="21.4" r="3.1"/></svg>
<div class="a" style="left:1218.3px;top:538.8px;width:317.7px;height:29px;background:#D1EDE8"></div>
<svg class="a" style="left:1216px;top:536px;width:34px;height:34px" viewBox="1216 536 34 34"><rect x="1219" y="538.9" width="28.6" height="28.3" rx="5.4" fill="#FFC95C" stroke="#A8935F" stroke-width="0.9" stroke-dasharray="1.1 1.1"/></svg>
<svg class="ic" style="left:1220.80px;top:541.30px;width:25.20px;height:23.60px;color:#00796B;" viewBox="0.75 0.5 22.38 22.38" preserveAspectRatio="none"><circle fill="none" stroke="currentColor" stroke-width="1.6" stroke-linecap="round" stroke-linejoin="round" cx="4.6" cy="3.4" r="2.1"/><path fill="none" stroke="currentColor" stroke-width="1.6" stroke-linecap="round" stroke-linejoin="round" d="M1.6 10 V9.2 Q1.6 7.2 3.6 7.2 H5.6 Q7.6 7.2 7.6 9.2 V10 Z"/><path fill="none" stroke="currentColor" stroke-width="2.2" stroke-linecap="round" stroke-linejoin="round" d="M11.6 6.4 H22"/><circle fill="none" stroke="currentColor" stroke-width="1.6" stroke-linecap="round" stroke-linejoin="round" cx="4.6" cy="15.4" r="2.1"/><path fill="none" stroke="currentColor" stroke-width="1.6" stroke-linecap="round" stroke-linejoin="round" d="M1.6 22 V21.2 Q1.6 19.2 3.6 19.2 H5.6 Q7.6 19.2 7.6 21.2 V22 Z"/><path fill="none" stroke="currentColor" stroke-width="2.2" stroke-linecap="round" stroke-linejoin="round" d="M11.6 18.4 H22"/></svg>
<svg class="ic" style="left:1250.75px;top:545.00px;width:24.70px;height:16.00px;color:#00796B;" viewBox="0.12 0.75 24.75 19.75" preserveAspectRatio="none"><circle fill="none" stroke="currentColor" stroke-width="1.7" stroke-linecap="round" stroke-linejoin="round" cx="12.5" cy="5" r="3.4"/><circle fill="none" stroke="currentColor" stroke-width="1.5" stroke-linecap="round" stroke-linejoin="round" cx="3.8" cy="5.4" r="2.1"/><circle fill="none" stroke="currentColor" stroke-width="1.5" stroke-linecap="round" stroke-linejoin="round" cx="21.2" cy="5.4" r="2.1"/><path fill="none" stroke="currentColor" stroke-width="1.7" stroke-linecap="round" stroke-linejoin="round" d="M5.6 19.6 V16 Q5.6 12 9.6 12 H15.4 Q19.4 12 19.4 16 V19.6 Z M1 14.6 Q1 10.6 4.6 10.8 M24 14.6 Q24 10.6 20.4 10.8"/></svg>
<svg class="ic" style="left:1282.00px;top:542.30px;width:22.60px;height:21.90px;color:#00796B;" viewBox="0.62 1.38 22.25 20.88" preserveAspectRatio="none"><path fill="none" stroke="currentColor" stroke-width="2" stroke-linecap="round" stroke-linejoin="round" d="M5 6 A9.4 9.4 0 1 1 3.4 14.6 M13 6.6 V12.4 L16.6 15.4"/><path fill="currentColor" d="M0.6 2.2 L8.6 2.6 L2.6 9.6 Z"/></svg>
<svg class="ic" style="left:1314.90px;top:542.30px;width:17.00px;height:21.50px;color:#00796B;" viewBox="0.38 0.12 16.25 21.5" preserveAspectRatio="none"><path fill="none" stroke="currentColor" stroke-width="2" stroke-linecap="round" stroke-linejoin="round" d="M1.4 1.2 H15.6 V20.6 L8.5 14.6 L1.4 20.6 Z"/></svg>
<svg class="ic" style="left:1341.10px;top:543.90px;width:24.50px;height:18.10px;color:#00796B;" viewBox="0.25 0.12 24.5 19.25" preserveAspectRatio="none"><path fill="none" stroke="currentColor" stroke-width="1.9" stroke-linecap="round" stroke-linejoin="round" d="M1.2 3 Q1.2 1.2 3 1.2 H8.6 L11 4 H22 Q23.8 4 23.8 5.8 V16.6 Q23.8 18.4 22 18.4 H3 Q1.2 18.4 1.2 16.6 Z"/><circle fill="currentColor" cx="8.6" cy="8.6" r="2"/><path fill="currentColor" d="M4.6 15 Q4.6 11.6 7.4 11.6 H9.8 Q12.6 11.6 12.6 15 Z"/></svg>
<svg class="a" style="left:1216px;top:565px;width:320px;height:36px" viewBox="1216 565 320 36"><rect x="1219.3" y="568.2" width="316" height="29.6" rx="14.8" fill="#fff" stroke="#1F8C7D" stroke-width="1.4"/></svg>
<svg class="ic" style="left:1224.50px;top:575.20px;width:14.50px;height:14.80px;color:#8CC5BC;" viewBox="0.25 0.25 14.75 14.75" preserveAspectRatio="none"><circle fill="none" stroke="currentColor" stroke-width="1.4" stroke-linecap="round" stroke-linejoin="round" cx="6.2" cy="6.2" r="5.2"/><path fill="none" stroke="currentColor" stroke-width="1.5" stroke-linecap="round" stroke-linejoin="round" d="M10 10 L14.2 14.2"/></svg>
<div class="a" style="left:1218.3px;top:598.4px;width:317.7px;height:21.6px;background:#E1E1E1;border-bottom:1px solid #C8C8C8"></div>
<div class="t" style="left:1223.5px;top:604.7px;font-size:11.4px;color:#111;letter-spacing:-0.060px">Show Everyone</div>
<svg class="ic" style="left:1521.50px;top:606.20px;width:9.50px;height:5.60px;color:#333;" viewBox="0.12 0.12 9.75 5.62" preserveAspectRatio="none"><path fill="none" stroke="currentColor" stroke-width="1.3" stroke-linecap="round" stroke-linejoin="round" d="M0.8 0.8 L5 5 L9.2 0.8"/></svg>
<div class="a" style="left:1218.3px;top:620px;width:298.7px;height:25px;background:#D1EDE8"></div>
<div class="t" style="left:1221.5px;top:628.4px;font-size:11.4px;color:#1B8A7B;letter-spacing:0.152px">Name</div>
<div class="t" style="left:1440px;top:628.4px;font-size:11.4px;color:#1B8A7B;letter-spacing:-0.016px">Born</div>
<div class="t" style="left:1479.5px;top:628.4px;font-size:11.4px;color:#1B8A7B;letter-spacing:0.091px">Died</div>
<div class="a" style="left:1218.3px;top:645px;width:298.7px;height:24px;background:#DCEEFC"></div>
<div class="t" style="left:1237px;top:652.6px;font-size:11.4px;color:#111;letter-spacing:0.026px">, Catherine</div>
<div class="t" style="left:1237px;top:676.6px;font-size:11.4px;color:#111;letter-spacing:0.026px">, Catherine</div>
<div class="t" style="left:1440px;top:676.6px;font-size:11.4px;color:#111">1811</div>
<div class="t" style="left:1237px;top:700.5px;font-size:11.4px;color:#111">, Clara</div>
<div class="t" style="left:1440px;top:700.5px;font-size:11.4px;color:#111">1843</div>
<div class="t" style="left:1237px;top:724.5px;font-size:11.4px;color:#111">, Josephine</div>
<div class="t" style="left:1440px;top:724.5px;font-size:11.4px;color:#111">1863</div>
<div class="t" style="left:1237px;top:748.4px;font-size:11.4px;color:#111">, Julia</div>
<div class="t" style="left:1440px;top:748.4px;font-size:11.4px;color:#111">1850</div>
<div class="a" style="left:1218.3px;top:644.5px;width:298.7px;height:1px;background:#BFE3DC"></div>
<div class="a" style="left:1218.3px;top:668.5px;width:298.7px;height:1px;background:#BFDDF0"></div>
<div class="a" style="left:1218.3px;top:692.4px;width:298.7px;height:1px;background:#CFCFCF"></div>
<div class="a" style="left:1218.3px;top:716.4px;width:298.7px;height:1px;background:#CFCFCF"></div>
<div class="a" style="left:1218.3px;top:740.3px;width:298.7px;height:1px;background:#CFCFCF"></div>
<div class="a" style="left:1218.3px;top:764.2px;width:298.7px;height:1px;background:#CFCFCF"></div>
<div class="a" style="left:1436.2px;top:620px;width:1px;height:148px;background:#CFCFCF"></div>
<div class="a" style="left:1476px;top:620px;width:1px;height:148px;background:#CFCFCF"></div>
<div class="a" style="left:1516.3px;top:620px;width:1px;height:148px;background:#CFCFCF"></div>
<div class="a" style="left:1517.3px;top:620px;width:18.7px;height:148px;background:#F1F1F1"></div>
<div class="a" style="left:1517.3px;top:637.5px;width:18.7px;height:13.5px;background:#C9C9C9"></div>
<svg class="ic" style="left:1522.00px;top:626.00px;width:8.60px;height:5.00px;color:#333;" viewBox="0.12 0.12 9.75 5.62" preserveAspectRatio="none"><path fill="none" stroke="currentColor" stroke-width="1.3" stroke-linecap="round" stroke-linejoin="round" d="M0.8 5 L5 0.8 L9.2 5"/></svg>
<svg class="ic" style="left:1522.00px;top:755.00px;width:8.60px;height:5.00px;color:#333;" viewBox="0.12 0.12 9.75 5.62" preserveAspectRatio="none"><path fill="none" stroke="currentColor" stroke-width="1.3" stroke-linecap="round" stroke-linejoin="round" d="M0.8 0.8 L5 5 L9.2 0.8"/></svg>
<svg class="a" style="left:0;top:0;width:1536px;height:779px;pointer-events:none" viewBox="0 0 1536 779">
<path d="M903.5 557.5 L815 554.5 L829.5 571.5 L676 660 Q673 664 677 667 Q680 668 683 666 L845 604 L848.5 626 Z" fill="#FF7F17"/>
<path d="M1266 207 L1330 216.8 L1317.5 229 L1413.6 306.2 Q1416.4 309.6 1413.2 312 Q1410.8 313 1408.4 311.4 L1301.7 250 L1297 264.5 Z" fill="#FF7F17"/>
</svg>
<div class="a" style="left:0;top:768px;width:1536px;height:11px;background:#D1EDE8;border-top:1.2px solid #1F8C7D;border-left:1.5px solid #1F8C7D"></div>
<div class="t" style="left:70px;top:775.5px;font-size:11.6px;color:#111;letter-spacing:0.057px">Ebenezer Huse Jewell</div>
</body></html>
